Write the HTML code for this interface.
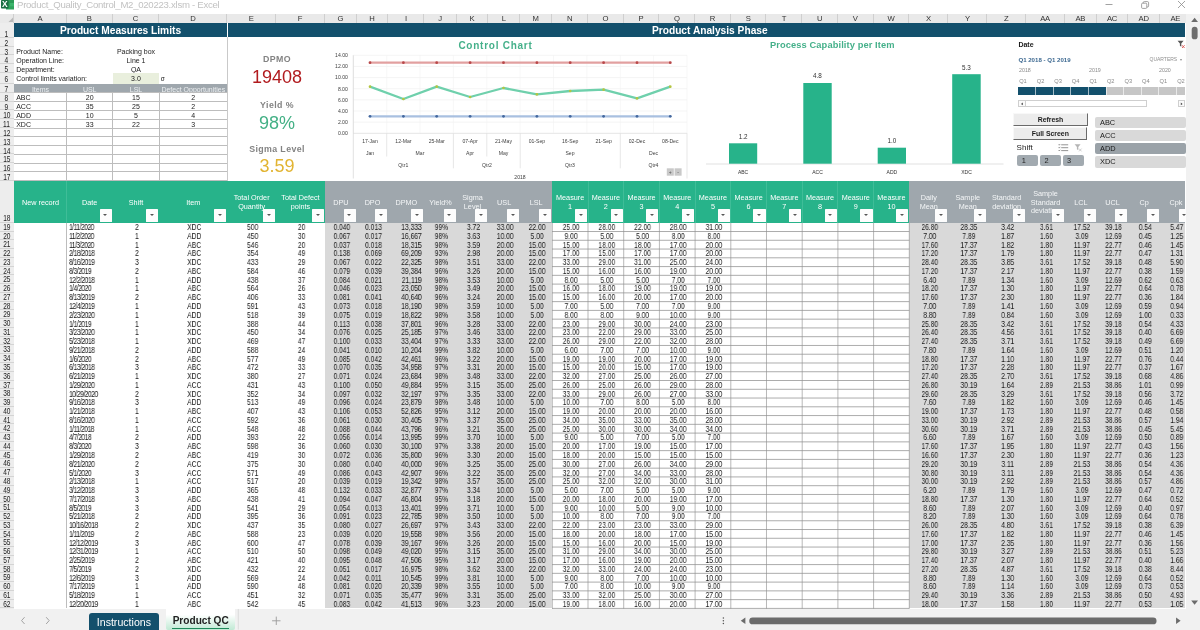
<!DOCTYPE html>
<html lang="en"><head><meta charset="utf-8"><title>Product_Quality_Control_M2_020223.xlsm - Excel</title>
<style>
html,body{margin:0;padding:0;background:#fff;}
body{width:1200px;height:630px;overflow:hidden;position:relative;font-family:"Liberation Sans",sans-serif;color:#222;}
#app{position:absolute;left:0;top:0;width:1200px;height:630px;overflow:hidden;background:#fff;will-change:transform;}
.abs{position:absolute;}
.titlebar{left:0;top:0;width:1200px;height:14.3px;background:#fff;}
.title{left:17px;top:-0.6px;font-size:9.6px;letter-spacing:-0.27px;line-height:12px;color:#c2c2c2;white-space:nowrap;}
.colhdr{left:0;top:14.3px;width:1185.5px;height:8.4px;background:#e9e9e9;overflow:hidden;}
.colhdr span{position:absolute;top:0;height:8.4px;line-height:9.9px;font-size:7.7px;letter-spacing:-0.3px;color:#333;text-align:center;border-right:1px solid #cfcfcf;box-sizing:border-box;}
.rowhdr{left:0;top:22.7px;width:14.3px;height:586px;background:#ededed;}
.rowhdr span{position:absolute;left:0;width:13.6px;text-align:center;font-size:8.7px;color:#222;border-bottom:1px solid #d4d4d4;box-sizing:border-box;}
.rowhdr span i{display:inline-block;font-style:normal;transform:scaleX(0.76);transform-origin:50% 50%;}
.band{background:#13506c;color:#fff;font-weight:bold;font-size:10.2px;text-align:center;line-height:16.8px;height:14.5px;top:22.7px;overflow:hidden;white-space:nowrap;}
.t7{font-size:7px;line-height:8.75px;white-space:nowrap;color:#1c1c1c;}
.hl{background:#bdbdbd;height:1px;}
.vl{background:#bdbdbd;width:1px;}
.h18{top:182px;height:42.1px;color:#fff;font-size:7.25px;line-height:8.7px;text-align:center;display:flex;align-items:center;justify-content:center;overflow:hidden;}
.g{background:#27b38a;}
.s{background:#9fa7ad;color:#eef1f3;}
.fb{position:absolute;width:12.3px;height:12.3px;top:209.4px;background:#fdfdfd;border-radius:0.5px;}
.fb:after{content:"";position:absolute;left:3.8px;top:5px;border-left:2.4px solid transparent;border-right:2.4px solid transparent;border-top:2.6px solid #555;}
.r{position:absolute;left:0;width:1500px;height:8.765px;}
.r span{position:absolute;top:0.3px;height:8.75px;line-height:9.1px;font-size:8.2px;text-align:center;white-space:nowrap;color:#161616;}
.kl{font-weight:bold;color:#838383;font-size:8.8px;letter-spacing:0.4px;text-align:center;width:100px;left:227px;white-space:nowrap;}
.kv{font-size:18px;text-align:center;width:100px;left:227px;white-space:nowrap;line-height:20px;}
.btn{background:#ececec;border-right:1.6px solid #6a6a6a;border-bottom:1.6px solid #6a6a6a;border-top:1px solid #f8f8f8;border-left:1px solid #f8f8f8;box-sizing:border-box;font-weight:bold;font-size:6.9px;text-align:center;color:#1a1a1a;}
.sl{left:1095px;width:90.5px;height:11.3px;background:#d9d9d9;border-radius:2px;font-size:7.4px;line-height:11.8px;color:#1a1a1a;box-sizing:border-box;padding-left:5px;}
.sb{height:10.6px;top:155.1px;background:#a2aab0;border-radius:2px;font-size:7.4px;line-height:11px;color:#222;box-sizing:border-box;padding-left:4.5px;}
</style></head><body><div id="app">

<div class="abs titlebar"></div>
<svg class="abs" style="left:1px;top:0" width="13" height="10.5" viewBox="0 0 13 10.5"><rect x="5" y="0" width="8" height="9.5" fill="#2fa35c"/><rect x="5" y="0" width="8" height="3" fill="#2b9a56"/><rect x="9" y="3" width="4" height="3.3" fill="#3bb56b"/><rect x="0" y="0" width="7.6" height="8.6" rx="0.8" fill="#1b6f43"/><text x="3.8" y="7.1" font-family="Liberation Sans, sans-serif" font-size="8.4" font-weight="bold" fill="#fff" text-anchor="middle">X</text></svg>
<div class="abs title">Product_Quality_Control_M2_020223.xlsm - Excel</div>
<svg class="abs" style="left:1095px;top:0" width="100" height="12" viewBox="0 0 100 12"><path d="M10.5 4.5 H17.5" stroke="#8a8a8a" stroke-width="0.8"/><rect x="46.6" y="3.2" width="5.2" height="5.2" rx="1" fill="none" stroke="#8a8a8a" stroke-width="0.8"/><path d="M48.2 3.2 V2.7 a1.1 1.1 0 0 1 1.1 -1.1 h3.2 a1.1 1.1 0 0 1 1.1 1.1 v3.2 a1.1 1.1 0 0 1 -1.1 1.1 h-0.7" fill="none" stroke="#8a8a8a" stroke-width="0.8"/><path d="M83 1 L90 8 M90 1 L83 8" stroke="#8a8a8a" stroke-width="0.8"/></svg>
<div class="abs colhdr">
<span style="left:0;width:14.3px"></span>
<span style="left:14.3px;width:52.4px">A</span>
<span style="left:66.7px;width:46.0px">B</span>
<span style="left:112.7px;width:46.6px">C</span>
<span style="left:159.3px;width:68.0px">D</span>
<span style="left:227.3px;width:48.7px">E</span>
<span style="left:276.0px;width:49.0px">F</span>
<span style="left:325.0px;width:31.7px">G</span>
<span style="left:356.7px;width:31.6px">H</span>
<span style="left:388.3px;width:36.0px">I</span>
<span style="left:424.3px;width:32.4px">J</span>
<span style="left:456.7px;width:31.6px">K</span>
<span style="left:488.3px;width:31.7px">L</span>
<span style="left:520.0px;width:32.3px">M</span>
<span style="left:552.3px;width:35.7px">N</span>
<span style="left:588.0px;width:35.7px">O</span>
<span style="left:623.7px;width:35.7px">P</span>
<span style="left:659.4px;width:35.7px">Q</span>
<span style="left:695.1px;width:35.7px">R</span>
<span style="left:730.8px;width:35.7px">S</span>
<span style="left:766.5px;width:35.7px">T</span>
<span style="left:802.2px;width:35.7px">U</span>
<span style="left:837.9px;width:35.7px">V</span>
<span style="left:873.6px;width:35.7px">W</span>
<span style="left:909.3px;width:39.0px">X</span>
<span style="left:948.3px;width:39.0px">Y</span>
<span style="left:987.3px;width:38.7px">Z</span>
<span style="left:1026.0px;width:39.0px">AA</span>
<span style="left:1065.0px;width:31.7px">AB</span>
<span style="left:1096.7px;width:31.6px">AC</span>
<span style="left:1128.3px;width:31.7px">AD</span>
<span style="left:1160.0px;width:31.7px">AE</span>
</div>
<svg class="abs" style="left:8px;top:16.5px" width="6" height="6" viewBox="0 0 6 6"><path d="M5 0.5 V5 H0.5 Z" fill="#b9b9b9"/></svg>
<div class="abs rowhdr">
<span style="top:0.00px;height:15.70px;line-height:22.80px"><i>1</i></span>
<span style="top:15.70px;height:8.30px;line-height:10.90px"><i>2</i></span>
<span style="top:24.00px;height:8.60px;line-height:11.20px"><i>3</i></span>
<span style="top:32.60px;height:9.00px;line-height:11.60px"><i>4</i></span>
<span style="top:41.60px;height:9.00px;line-height:11.60px"><i>5</i></span>
<span style="top:50.60px;height:10.90px;line-height:13.50px"><i>6</i></span>
<span style="top:61.50px;height:8.77px;line-height:11.37px"><i>7</i></span>
<span style="top:70.27px;height:8.77px;line-height:11.37px"><i>8</i></span>
<span style="top:79.04px;height:8.77px;line-height:11.37px"><i>9</i></span>
<span style="top:87.81px;height:8.77px;line-height:11.37px"><i>10</i></span>
<span style="top:96.58px;height:8.77px;line-height:11.37px"><i>11</i></span>
<span style="top:105.35px;height:8.77px;line-height:11.37px"><i>12</i></span>
<span style="top:114.12px;height:8.77px;line-height:11.37px"><i>13</i></span>
<span style="top:122.89px;height:8.77px;line-height:11.37px"><i>14</i></span>
<span style="top:131.66px;height:8.77px;line-height:11.37px"><i>15</i></span>
<span style="top:140.43px;height:8.77px;line-height:11.37px"><i>16</i></span>
<span style="top:149.20px;height:8.80px;line-height:11.40px"><i>17</i></span>
<span style="top:158.00px;height:42.10px;line-height:75.60px"><i>18</i></span>
<span style="top:200.10px;height:8.76px;line-height:9.36px"><i>19</i></span>
<span style="top:208.87px;height:8.77px;line-height:9.37px"><i>20</i></span>
<span style="top:217.63px;height:8.77px;line-height:9.37px"><i>21</i></span>
<span style="top:226.40px;height:8.76px;line-height:9.36px"><i>22</i></span>
<span style="top:235.16px;height:8.76px;line-height:9.36px"><i>23</i></span>
<span style="top:243.93px;height:8.76px;line-height:9.36px"><i>24</i></span>
<span style="top:252.69px;height:8.77px;line-height:9.37px"><i>25</i></span>
<span style="top:261.46px;height:8.76px;line-height:9.36px"><i>26</i></span>
<span style="top:270.22px;height:8.76px;line-height:9.36px"><i>27</i></span>
<span style="top:278.99px;height:8.77px;line-height:9.37px"><i>28</i></span>
<span style="top:287.75px;height:8.76px;line-height:9.36px"><i>29</i></span>
<span style="top:296.52px;height:8.76px;line-height:9.36px"><i>30</i></span>
<span style="top:305.28px;height:8.76px;line-height:9.36px"><i>31</i></span>
<span style="top:314.05px;height:8.76px;line-height:9.36px"><i>32</i></span>
<span style="top:322.81px;height:8.77px;line-height:9.37px"><i>33</i></span>
<span style="top:331.58px;height:8.76px;line-height:9.36px"><i>34</i></span>
<span style="top:340.34px;height:8.76px;line-height:9.36px"><i>35</i></span>
<span style="top:349.11px;height:8.77px;line-height:9.37px"><i>36</i></span>
<span style="top:357.87px;height:8.76px;line-height:9.36px"><i>37</i></span>
<span style="top:366.64px;height:8.76px;line-height:9.36px"><i>38</i></span>
<span style="top:375.40px;height:8.76px;line-height:9.36px"><i>39</i></span>
<span style="top:384.17px;height:8.76px;line-height:9.36px"><i>40</i></span>
<span style="top:392.93px;height:8.77px;line-height:9.37px"><i>41</i></span>
<span style="top:401.70px;height:8.76px;line-height:9.36px"><i>42</i></span>
<span style="top:410.46px;height:8.76px;line-height:9.36px"><i>43</i></span>
<span style="top:419.23px;height:8.77px;line-height:9.37px"><i>44</i></span>
<span style="top:427.99px;height:8.76px;line-height:9.36px"><i>45</i></span>
<span style="top:436.76px;height:8.76px;line-height:9.36px"><i>46</i></span>
<span style="top:445.52px;height:8.76px;line-height:9.36px"><i>47</i></span>
<span style="top:454.29px;height:8.77px;line-height:9.37px"><i>48</i></span>
<span style="top:463.05px;height:8.76px;line-height:9.36px"><i>49</i></span>
<span style="top:471.82px;height:8.76px;line-height:9.36px"><i>50</i></span>
<span style="top:480.58px;height:8.77px;line-height:9.37px"><i>51</i></span>
<span style="top:489.35px;height:8.76px;line-height:9.36px"><i>52</i></span>
<span style="top:498.11px;height:8.77px;line-height:9.37px"><i>53</i></span>
<span style="top:506.88px;height:8.76px;line-height:9.36px"><i>54</i></span>
<span style="top:515.64px;height:8.76px;line-height:9.36px"><i>55</i></span>
<span style="top:524.40px;height:8.77px;line-height:9.37px"><i>56</i></span>
<span style="top:533.17px;height:8.76px;line-height:9.36px"><i>57</i></span>
<span style="top:541.93px;height:8.77px;line-height:9.37px"><i>58</i></span>
<span style="top:550.70px;height:8.76px;line-height:9.36px"><i>59</i></span>
<span style="top:559.46px;height:8.77px;line-height:9.37px"><i>60</i></span>
<span style="top:568.23px;height:8.76px;line-height:9.36px"><i>61</i></span>
<span style="top:577.00px;height:8.76px;line-height:9.36px"><i>62</i></span>
</div>
<div class="abs band" style="left:14.3px;width:212.4px">Product Measures Limits</div>
<div class="abs" style="left:227.9px;top:22.7px;width:957.6px;height:14.5px;overflow:hidden"><div class="abs band" style="left:0;top:0;width:963.8px">Product Analysis Phase</div></div>
<div class="abs t7" style="left:16.2px;top:46.70px;line-height:9.40px">Product Name:</div>
<div class="abs t7" style="left:112.7px;width:46.6px;text-align:center;top:46.70px;line-height:9.40px">Packing box</div>
<div class="abs t7" style="left:16.2px;top:55.90px;line-height:9.20px">Operation Line:</div>
<div class="abs t7" style="left:112.7px;width:46.6px;text-align:center;top:55.90px;line-height:9.20px">Line 1</div>
<div class="abs t7" style="left:16.2px;top:64.90px;line-height:9.20px">Department:</div>
<div class="abs t7" style="left:112.7px;width:46.6px;text-align:center;top:64.90px;line-height:9.20px">QA</div>
<div class="abs" style="left:112.7px;top:73.00px;width:46.6px;height:11.20px;background:#e9efdd"></div>
<div class="abs t7" style="left:16.2px;top:74.00px;line-height:10.80px">Control limits variation:</div>
<div class="abs t7" style="left:112.7px;width:46.6px;text-align:center;top:74.00px;line-height:10.80px">3.0</div>
<div class="abs t7" style="left:160.7px;top:74.00px;line-height:10.80px;font-size:6.5px">&#963;</div>
<div class="abs" style="left:14.3px;top:84.20px;width:213.0px;height:8.77px;background:#9fa7ad"></div>
<div class="abs t7" style="left:14.3px;width:52.4px;text-align:center;top:85.50px;color:#eceff1;overflow:hidden">Items</div>
<div class="abs t7" style="left:66.7px;width:46.0px;text-align:center;top:85.50px;color:#eceff1;overflow:hidden">USL</div>
<div class="abs t7" style="left:112.7px;width:46.6px;text-align:center;top:85.50px;color:#eceff1;overflow:hidden">LSL</div>
<div class="abs t7" style="left:159.3px;width:68.0px;text-align:center;top:85.50px;color:#eceff1;overflow:hidden">Defect Opportunities</div>
<div class="abs t7" style="left:16.2px;top:94.37px">ABC</div>
<div class="abs t7" style="left:66.7px;width:46.0px;text-align:center;top:94.37px">20</div>
<div class="abs t7" style="left:112.7px;width:46.6px;text-align:center;top:94.37px">15</div>
<div class="abs t7" style="left:159.3px;width:68.0px;text-align:center;top:94.37px">2</div>
<div class="abs t7" style="left:16.2px;top:103.14px">ACC</div>
<div class="abs t7" style="left:66.7px;width:46.0px;text-align:center;top:103.14px">35</div>
<div class="abs t7" style="left:112.7px;width:46.6px;text-align:center;top:103.14px">25</div>
<div class="abs t7" style="left:159.3px;width:68.0px;text-align:center;top:103.14px">2</div>
<div class="abs t7" style="left:16.2px;top:111.91px">ADD</div>
<div class="abs t7" style="left:66.7px;width:46.0px;text-align:center;top:111.91px">10</div>
<div class="abs t7" style="left:112.7px;width:46.6px;text-align:center;top:111.91px">5</div>
<div class="abs t7" style="left:159.3px;width:68.0px;text-align:center;top:111.91px">4</div>
<div class="abs t7" style="left:16.2px;top:120.68px">XDC</div>
<div class="abs t7" style="left:66.7px;width:46.0px;text-align:center;top:120.68px">33</div>
<div class="abs t7" style="left:112.7px;width:46.6px;text-align:center;top:120.68px">22</div>
<div class="abs t7" style="left:159.3px;width:68.0px;text-align:center;top:120.68px">3</div>
<div class="abs hl" style="left:14.3px;width:213.0px;top:92.47px"></div>
<div class="abs hl" style="left:14.3px;width:213.0px;top:101.24px"></div>
<div class="abs hl" style="left:14.3px;width:213.0px;top:110.01px"></div>
<div class="abs hl" style="left:14.3px;width:213.0px;top:118.78px"></div>
<div class="abs hl" style="left:14.3px;width:213.0px;top:127.55px"></div>
<div class="abs hl" style="left:14.3px;width:213.0px;top:136.32px"></div>
<div class="abs hl" style="left:14.3px;width:213.0px;top:145.09px"></div>
<div class="abs hl" style="left:14.3px;width:213.0px;top:153.86px"></div>
<div class="abs hl" style="left:14.3px;width:213.0px;top:162.63px"></div>
<div class="abs hl" style="left:14.3px;width:213.0px;top:171.40px"></div>
<div class="abs hl" style="left:14.3px;width:213.0px;top:180.20px"></div>
<div class="abs vl" style="left:66.2px;top:92.97px;height:87.73px"></div>
<div class="abs vl" style="left:112.2px;top:92.97px;height:87.73px"></div>
<div class="abs vl" style="left:158.8px;top:92.97px;height:87.73px"></div>
<div class="abs vl" style="left:226.8px;top:37.2px;height:143.5px;background:#c9c9c9"></div>
<div class="abs kl" style="top:54px">DPMO</div>
<div class="abs kv" style="top:67px;color:#b11a1e">19408</div>
<div class="abs kl" style="top:100px">Yield %</div>
<div class="abs kv" style="top:113px;color:#43b085">98%</div>
<div class="abs kl" style="top:143.8px">Sigma Level</div>
<div class="abs kv" style="top:156px;color:#e2b432">3.59</div>
<svg class="abs" style="left:330px;top:38px" width="370" height="143" viewBox="0 0 370 143" font-family="Liberation Sans, sans-serif"><text x="165.5" y="10.6" text-anchor="middle" font-size="10" font-weight="bold" fill="#45b08a" letter-spacing="0.75">Control Chart</text><line x1="23.3" x2="357.0" y1="95.30" y2="95.30" stroke="#d4d4d4" stroke-width="0.6"/><text x="17.8" y="97.10" text-anchor="end" font-size="5.1" fill="#404040">0.00</text><line x1="23.3" x2="357.0" y1="84.16" y2="84.16" stroke="#efefef" stroke-width="0.6"/><text x="17.8" y="85.96" text-anchor="end" font-size="5.1" fill="#404040">2.00</text><line x1="23.3" x2="357.0" y1="73.02" y2="73.02" stroke="#efefef" stroke-width="0.6"/><text x="17.8" y="74.82" text-anchor="end" font-size="5.1" fill="#404040">4.00</text><line x1="23.3" x2="357.0" y1="61.87" y2="61.87" stroke="#efefef" stroke-width="0.6"/><text x="17.8" y="63.67" text-anchor="end" font-size="5.1" fill="#404040">6.00</text><line x1="23.3" x2="357.0" y1="50.73" y2="50.73" stroke="#efefef" stroke-width="0.6"/><text x="17.8" y="52.53" text-anchor="end" font-size="5.1" fill="#404040">8.00</text><line x1="23.3" x2="357.0" y1="39.59" y2="39.59" stroke="#efefef" stroke-width="0.6"/><text x="17.8" y="41.39" text-anchor="end" font-size="5.1" fill="#404040">10.00</text><line x1="23.3" x2="357.0" y1="28.45" y2="28.45" stroke="#efefef" stroke-width="0.6"/><text x="17.8" y="30.25" text-anchor="end" font-size="5.1" fill="#404040">12.00</text><line x1="23.3" x2="357.0" y1="17.31" y2="17.31" stroke="#efefef" stroke-width="0.6"/><text x="17.8" y="19.11" text-anchor="end" font-size="5.1" fill="#404040">14.00</text><line x1="23.3" x2="23.3" y1="17.3" y2="95.3" stroke="#f1f1f1" stroke-width="0.6"/><line x1="56.7" x2="56.7" y1="17.3" y2="95.3" stroke="#f1f1f1" stroke-width="0.6"/><line x1="90.0" x2="90.0" y1="17.3" y2="95.3" stroke="#f1f1f1" stroke-width="0.6"/><line x1="123.4" x2="123.4" y1="17.3" y2="95.3" stroke="#f1f1f1" stroke-width="0.6"/><line x1="156.8" x2="156.8" y1="17.3" y2="95.3" stroke="#f1f1f1" stroke-width="0.6"/><line x1="190.1" x2="190.1" y1="17.3" y2="95.3" stroke="#f1f1f1" stroke-width="0.6"/><line x1="223.5" x2="223.5" y1="17.3" y2="95.3" stroke="#f1f1f1" stroke-width="0.6"/><line x1="256.9" x2="256.9" y1="17.3" y2="95.3" stroke="#f1f1f1" stroke-width="0.6"/><line x1="290.3" x2="290.3" y1="17.3" y2="95.3" stroke="#f1f1f1" stroke-width="0.6"/><line x1="323.6" x2="323.6" y1="17.3" y2="95.3" stroke="#f1f1f1" stroke-width="0.6"/><line x1="357.0" x2="357.0" y1="17.3" y2="95.3" stroke="#f1f1f1" stroke-width="0.6"/><line x1="23.3" x2="23.3" y1="17.3" y2="140.5" stroke="#d4d4d4" stroke-width="0.7"/><line x1="56.7" x2="56.7" y1="95.3" y2="118.5" stroke="#dcdcdc" stroke-width="0.7"/><line x1="123.4" x2="123.4" y1="95.3" y2="130.3" stroke="#dcdcdc" stroke-width="0.7"/><line x1="156.8" x2="156.8" y1="95.3" y2="118.5" stroke="#dcdcdc" stroke-width="0.7"/><line x1="190.2" x2="190.2" y1="95.3" y2="130.3" stroke="#dcdcdc" stroke-width="0.7"/><line x1="290.3" x2="290.3" y1="95.3" y2="130.3" stroke="#dcdcdc" stroke-width="0.7"/><line x1="357.0" x2="357.0" y1="95.3" y2="140.5" stroke="#dcdcdc" stroke-width="0.7"/><line x1="40.0" x2="340.3" y1="24.7" y2="24.7" stroke="#e2a0a0" stroke-width="2.3"/><line x1="40.0" x2="340.3" y1="78.3" y2="78.3" stroke="#a9c0e0" stroke-width="2.3"/><polyline points="40.0,48.7 73.4,61.0 106.7,48.7 140.1,59.0 173.5,50.0 206.9,56.3 240.2,53.0 273.6,51.7 307.0,60.3 340.3,48.7" fill="none" stroke="#6fd0ac" stroke-width="2.3" stroke-linejoin="round"/><circle cx="40.0" cy="48.7" r="1.35" fill="#b5c540"/><circle cx="73.4" cy="61.0" r="1.35" fill="#b5c540"/><circle cx="106.7" cy="48.7" r="1.35" fill="#b5c540"/><circle cx="140.1" cy="59.0" r="1.35" fill="#b5c540"/><circle cx="173.5" cy="50.0" r="1.35" fill="#b5c540"/><circle cx="206.9" cy="56.3" r="1.35" fill="#b5c540"/><circle cx="240.2" cy="53.0" r="1.35" fill="#b5c540"/><circle cx="273.6" cy="51.7" r="1.35" fill="#b5c540"/><circle cx="307.0" cy="60.3" r="1.35" fill="#b5c540"/><circle cx="340.3" cy="48.7" r="1.35" fill="#b5c540"/><circle cx="40.0" cy="24.7" r="1.4" fill="#b8484a"/><circle cx="40.0" cy="78.3" r="1.4" fill="#44689f"/><circle cx="73.4" cy="24.7" r="1.4" fill="#b8484a"/><circle cx="73.4" cy="78.3" r="1.4" fill="#44689f"/><circle cx="106.7" cy="24.7" r="1.4" fill="#b8484a"/><circle cx="106.7" cy="78.3" r="1.4" fill="#44689f"/><circle cx="140.1" cy="24.7" r="1.4" fill="#b8484a"/><circle cx="140.1" cy="78.3" r="1.4" fill="#44689f"/><circle cx="173.5" cy="24.7" r="1.4" fill="#b8484a"/><circle cx="173.5" cy="78.3" r="1.4" fill="#44689f"/><circle cx="206.9" cy="24.7" r="1.4" fill="#b8484a"/><circle cx="206.9" cy="78.3" r="1.4" fill="#44689f"/><circle cx="240.2" cy="24.7" r="1.4" fill="#b8484a"/><circle cx="240.2" cy="78.3" r="1.4" fill="#44689f"/><circle cx="273.6" cy="24.7" r="1.4" fill="#b8484a"/><circle cx="273.6" cy="78.3" r="1.4" fill="#44689f"/><circle cx="307.0" cy="24.7" r="1.4" fill="#b8484a"/><circle cx="307.0" cy="78.3" r="1.4" fill="#44689f"/><circle cx="340.3" cy="24.7" r="1.4" fill="#b8484a"/><circle cx="340.3" cy="78.3" r="1.4" fill="#44689f"/><text x="40.0" y="104.8" text-anchor="middle" font-size="5.1" fill="#404040">17-Jan</text><text x="73.4" y="104.8" text-anchor="middle" font-size="5.1" fill="#404040">12-Mar</text><text x="106.7" y="104.8" text-anchor="middle" font-size="5.1" fill="#404040">25-Mar</text><text x="140.1" y="104.8" text-anchor="middle" font-size="5.1" fill="#404040">07-Apr</text><text x="173.5" y="104.8" text-anchor="middle" font-size="5.1" fill="#404040">21-May</text><text x="206.9" y="104.8" text-anchor="middle" font-size="5.1" fill="#404040">01-Sep</text><text x="240.2" y="104.8" text-anchor="middle" font-size="5.1" fill="#404040">16-Sep</text><text x="273.6" y="104.8" text-anchor="middle" font-size="5.1" fill="#404040">21-Sep</text><text x="307.0" y="104.8" text-anchor="middle" font-size="5.1" fill="#404040">02-Dec</text><text x="340.3" y="104.8" text-anchor="middle" font-size="5.1" fill="#404040">08-Dec</text><text x="40.0" y="117.0" text-anchor="middle" font-size="5.1" fill="#404040">Jan</text><text x="90.0" y="117.0" text-anchor="middle" font-size="5.1" fill="#404040">Mar</text><text x="140.0" y="117.0" text-anchor="middle" font-size="5.1" fill="#404040">Apr</text><text x="173.5" y="117.0" text-anchor="middle" font-size="5.1" fill="#404040">May</text><text x="240.0" y="117.0" text-anchor="middle" font-size="5.1" fill="#404040">Sep</text><text x="323.5" y="117.0" text-anchor="middle" font-size="5.1" fill="#404040">Dec</text><text x="73.3" y="128.8" text-anchor="middle" font-size="5.1" fill="#404040">Qtr1</text><text x="157.0" y="128.8" text-anchor="middle" font-size="5.1" fill="#404040">Qtr2</text><text x="240.0" y="128.8" text-anchor="middle" font-size="5.1" fill="#404040">Qtr3</text><text x="323.5" y="128.8" text-anchor="middle" font-size="5.1" fill="#404040">Qtr4</text><text x="190.0" y="140.6" text-anchor="middle" font-size="5.1" fill="#404040">2018</text><rect x="336.8" y="130.3" width="7" height="7.4" fill="#c9c9c9"/><rect x="344.6" y="130.3" width="7" height="7.4" fill="#c9c9c9"/><text x="340.3" y="135.8" text-anchor="middle" font-size="5" fill="#555">+</text><text x="348.1" y="135.6" text-anchor="middle" font-size="5" fill="#555">-</text></svg>
<svg class="abs" style="left:700px;top:38px" width="310" height="143" viewBox="0 0 310 143" font-family="Liberation Sans, sans-serif"><text x="132.3" y="9.9" text-anchor="middle" font-size="9.3" font-weight="bold" fill="#45b08a" letter-spacing="0.1">Process Capability per Item</text><line x1="6.0" x2="303.5" y1="126.0" y2="126.0" stroke="#d9d9d9" stroke-width="0.8"/><rect x="29.0" y="105.3" width="28.2" height="20.4" fill="#27b38a"/><text x="43.1" y="100.7" text-anchor="middle" font-size="6.3" fill="#303030">1.2</text><text x="43.1" y="135.8" text-anchor="middle" font-size="5" fill="#303030">ABC</text><rect x="103.3" y="45.0" width="28.4" height="80.7" fill="#27b38a"/><text x="117.5" y="40.4" text-anchor="middle" font-size="6.3" fill="#303030">4.8</text><text x="117.5" y="135.8" text-anchor="middle" font-size="5" fill="#303030">ACC</text><rect x="177.7" y="109.7" width="28.3" height="16.0" fill="#27b38a"/><text x="191.9" y="105.1" text-anchor="middle" font-size="6.3" fill="#303030">1.0</text><text x="191.9" y="135.8" text-anchor="middle" font-size="5" fill="#303030">ADD</text><rect x="252.2" y="36.2" width="28.5" height="89.5" fill="#27b38a"/><text x="266.5" y="31.6" text-anchor="middle" font-size="6.3" fill="#303030">5.3</text><text x="266.5" y="135.8" text-anchor="middle" font-size="5" fill="#303030">XDC</text></svg>
<div class="abs" style="left:1018.4px;top:40.2px;font-size:7px;font-weight:bold;color:#1a1a1a;line-height:9px">Date</div>
<svg class="abs" style="left:1176.5px;top:39.5px" width="10" height="10" viewBox="0 0 10 10"><path d="M0.6 0.8 H6.6 L4.3 3.6 V6.8 L2.9 5.8 V3.6 Z" fill="#555"/><path d="M5 5.2 L7.6 8 M7.6 5.2 L5 8" stroke="#d9534f" stroke-width="0.9"/></svg>
<div class="abs" style="left:1018.4px;top:54.6px;font-size:6.1px;font-weight:bold;color:#3d6991;line-height:9px;white-space:nowrap">Q1 2018 - Q1 2019</div>
<div class="abs" style="left:1149.5px;top:55px;font-size:5px;color:#909090;line-height:9px;white-space:nowrap">QUARTERS <span style="font-size:4px;position:relative;top:-0.5px;left:1px">&#9662;</span></div>
<div class="abs" style="left:1019.0px;top:66.3px;font-size:5.3px;color:#8a8a8a;line-height:9px">2018</div>
<div class="abs" style="left:1089.0px;top:66.3px;font-size:5.3px;color:#8a8a8a;line-height:9px">2019</div>
<div class="abs" style="left:1159.0px;top:66.3px;font-size:5.3px;color:#8a8a8a;line-height:9px">2020</div>
<div class="abs" style="left:1018.4px;top:76px;width:167.1px;height:20px;overflow:hidden">
<div class="abs" style="left:0.80px;top:1px;font-size:5.7px;color:#8a8a8a;line-height:9px">Q1</div>
<div class="abs" style="left:0.00px;top:10.9px;width:17.6px;height:8.5px;background:#13506c"></div>
<div class="abs" style="left:18.35px;top:1px;font-size:5.7px;color:#8a8a8a;line-height:9px">Q2</div>
<div class="abs" style="left:17.55px;top:10.9px;width:17.6px;height:8.5px;background:#13506c"></div>
<div class="abs" style="left:16.95px;top:10.9px;width:0.9px;height:8.5px;background:rgba(255,255,255,0.62)"></div>
<div class="abs" style="left:35.90px;top:1px;font-size:5.7px;color:#8a8a8a;line-height:9px">Q3</div>
<div class="abs" style="left:35.10px;top:10.9px;width:17.6px;height:8.5px;background:#13506c"></div>
<div class="abs" style="left:34.50px;top:10.9px;width:0.9px;height:8.5px;background:rgba(255,255,255,0.62)"></div>
<div class="abs" style="left:53.45px;top:1px;font-size:5.7px;color:#8a8a8a;line-height:9px">Q4</div>
<div class="abs" style="left:52.65px;top:10.9px;width:17.6px;height:8.5px;background:#13506c"></div>
<div class="abs" style="left:52.05px;top:10.9px;width:0.9px;height:8.5px;background:rgba(255,255,255,0.62)"></div>
<div class="abs" style="left:71.00px;top:1px;font-size:5.7px;color:#8a8a8a;line-height:9px">Q1</div>
<div class="abs" style="left:70.20px;top:10.9px;width:17.6px;height:8.5px;background:#13506c"></div>
<div class="abs" style="left:69.60px;top:10.9px;width:0.9px;height:8.5px;background:rgba(255,255,255,0.62)"></div>
<div class="abs" style="left:88.55px;top:1px;font-size:5.7px;color:#8a8a8a;line-height:9px">Q2</div>
<div class="abs" style="left:87.75px;top:10.9px;width:17.6px;height:8.5px;background:#c6c6c6"></div>
<div class="abs" style="left:87.15px;top:10.9px;width:0.9px;height:8.5px;background:rgba(255,255,255,0.62)"></div>
<div class="abs" style="left:106.10px;top:1px;font-size:5.7px;color:#8a8a8a;line-height:9px">Q3</div>
<div class="abs" style="left:105.30px;top:10.9px;width:17.6px;height:8.5px;background:#c6c6c6"></div>
<div class="abs" style="left:104.70px;top:10.9px;width:0.9px;height:8.5px;background:rgba(255,255,255,0.62)"></div>
<div class="abs" style="left:123.65px;top:1px;font-size:5.7px;color:#8a8a8a;line-height:9px">Q4</div>
<div class="abs" style="left:122.85px;top:10.9px;width:17.6px;height:8.5px;background:#c6c6c6"></div>
<div class="abs" style="left:122.25px;top:10.9px;width:0.9px;height:8.5px;background:rgba(255,255,255,0.62)"></div>
<div class="abs" style="left:141.20px;top:1px;font-size:5.7px;color:#8a8a8a;line-height:9px">Q1</div>
<div class="abs" style="left:140.40px;top:10.9px;width:17.6px;height:8.5px;background:#c6c6c6"></div>
<div class="abs" style="left:139.80px;top:10.9px;width:0.9px;height:8.5px;background:rgba(255,255,255,0.62)"></div>
<div class="abs" style="left:158.75px;top:1px;font-size:5.7px;color:#8a8a8a;line-height:9px">Q2</div>
<div class="abs" style="left:157.95px;top:10.9px;width:17.6px;height:8.5px;background:#c6c6c6"></div>
<div class="abs" style="left:157.35px;top:10.9px;width:0.9px;height:8.5px;background:rgba(255,255,255,0.62)"></div>
</div>
<div class="abs" style="left:1018.4px;top:99.8px;width:128.4px;height:7.6px;box-sizing:border-box;border:1px solid #cfcfcf;background:#fff"></div>
<div class="abs" style="left:1018.4px;top:99.8px;width:7.6px;height:7.6px;box-sizing:border-box;border:1px solid #cfcfcf;background:#fbfbfb"></div>
<div class="abs" style="left:1178.3px;top:99.8px;width:7.2px;height:7.6px;box-sizing:border-box;border:1px solid #cfcfcf;background:#fbfbfb"></div>
<svg class="abs" style="left:1018.4px;top:99.8px" width="168" height="8" viewBox="0 0 168 8"><path d="M4.8 2.6 V5.2 L3 3.9 Z" fill="#444"/><path d="M162.8 2.6 V5.2 L164.6 3.9 Z" fill="#444"/></svg>
<div class="abs btn" style="left:1013.3px;top:113.2px;width:74.4px;height:12.4px;line-height:11.6px">Refresh</div>
<div class="abs btn" style="left:1013.3px;top:127.2px;width:74px;height:12.8px;line-height:11.8px">Full Screen</div>
<div class="abs" style="left:1016.6px;top:142.6px;font-size:8px;line-height:10px;color:#222">Shift</div>
<svg class="abs" style="left:1058px;top:142.5px" width="26" height="10" viewBox="0 0 26 10"><g stroke="#666" stroke-width="0.7" fill="none"><path d="M3.2 1.8 H10.2 M3.2 4.7 H10.2 M3.2 7.6 H10.2"/><path d="M0.6 1.6 l0.6 0.6 l1 -1.2 M0.6 4.5 l0.6 0.6 l1 -1.2 M0.6 7.4 l0.6 0.6 l1 -1.2"/></g><path d="M16.6 1.2 H22.6 L20.3 4 V7.2 L18.9 6.2 V4 Z" fill="#b5b5b5"/><path d="M21 5.6 L23.6 8.4 M23.6 5.6 L21 8.4" stroke="#c9c9c9" stroke-width="0.9"/></svg>
<div class="abs sb" style="left:1017.2px;width:20.8px">1</div>
<div class="abs sb" style="left:1040.0px;width:20.8px">2</div>
<div class="abs sb" style="left:1062.6px;width:21.2px">3</div>
<div class="abs sl" style="top:117.0px;">ABC</div>
<div class="abs sl" style="top:130.1px;">ACC</div>
<div class="abs sl" style="top:143.1px;background:#9aa2a8;">ADD</div>
<div class="abs sl" style="top:156.3px;">XDC</div>
<div class="abs g" style="left:14.3px;top:180.7px;width:310.7px;height:42.1px"></div>
<div class="abs" style="left:325px;top:180.7px;width:227.3px;height:42.1px;background:#9fa7ad"></div>
<div class="abs g" style="left:552.3px;top:180.7px;width:357.0px;height:42.1px"></div>
<div class="abs" style="left:909.3px;top:180.7px;width:276.2px;height:42.1px;background:#9fa7ad"></div>
<div class="abs" style="left:0;top:0;width:1185.5px;height:630px;overflow:hidden;pointer-events:none">
<div class="abs h18" style="left:14.3px;width:52.4px;"><span>New record</span></div>
<div class="abs h18" style="left:66.7px;width:46.0px;"><span>Date</span></div>
<div class="fb" style="left:99.5px"></div>
<div class="abs h18" style="left:112.7px;width:46.6px;"><span>Shift</span></div>
<div class="fb" style="left:146.1px"></div>
<div class="abs h18" style="left:159.3px;width:68.0px;"><span>Item</span></div>
<div class="fb" style="left:214.1px"></div>
<div class="abs h18" style="left:227.3px;width:48.7px;"><span>Total Order<br>Quantity</span></div>
<div class="fb" style="left:262.8px"></div>
<div class="abs h18" style="left:276.0px;width:49.0px;"><span>Total Defect<br>points</span></div>
<div class="fb" style="left:311.8px"></div>
<div class="abs h18" style="left:325.0px;width:31.7px;color:#f4f6f7;"><span>DPU</span></div>
<div class="fb" style="left:343.5px"></div>
<div class="abs h18" style="left:356.7px;width:31.6px;color:#f4f6f7;"><span>DPO</span></div>
<div class="fb" style="left:375.1px"></div>
<div class="abs h18" style="left:388.3px;width:36.0px;color:#f4f6f7;"><span>DPMO</span></div>
<div class="fb" style="left:411.1px"></div>
<div class="abs h18" style="left:424.3px;width:32.4px;color:#f4f6f7;"><span>Yield%</span></div>
<div class="fb" style="left:443.5px"></div>
<div class="abs h18" style="left:456.7px;width:31.6px;color:#f4f6f7;"><span>Sigma<br>Level</span></div>
<div class="fb" style="left:475.1px"></div>
<div class="abs h18" style="left:488.3px;width:31.7px;color:#f4f6f7;"><span>USL</span></div>
<div class="fb" style="left:506.8px"></div>
<div class="abs h18" style="left:520.0px;width:32.3px;color:#f4f6f7;"><span>LSL</span></div>
<div class="fb" style="left:539.1px"></div>
<div class="abs h18" style="left:552.3px;width:35.7px;"><span>Measure<br>1</span></div>
<div class="fb" style="left:574.8px"></div>
<div class="abs h18" style="left:588.0px;width:35.7px;"><span>Measure<br>2</span></div>
<div class="fb" style="left:610.5px"></div>
<div class="abs h18" style="left:623.7px;width:35.7px;"><span>Measure<br>3</span></div>
<div class="fb" style="left:646.2px"></div>
<div class="abs h18" style="left:659.4px;width:35.7px;"><span>Measure<br>4</span></div>
<div class="fb" style="left:681.9px"></div>
<div class="abs h18" style="left:695.1px;width:35.7px;"><span>Measure<br>5</span></div>
<div class="fb" style="left:717.6px"></div>
<div class="abs h18" style="left:730.8px;width:35.7px;"><span>Measure<br>6</span></div>
<div class="fb" style="left:753.3px"></div>
<div class="abs h18" style="left:766.5px;width:35.7px;"><span>Measure<br>7</span></div>
<div class="fb" style="left:789.0px"></div>
<div class="abs h18" style="left:802.2px;width:35.7px;"><span>Measure<br>8</span></div>
<div class="fb" style="left:824.7px"></div>
<div class="abs h18" style="left:837.9px;width:35.7px;"><span>Measure<br>9</span></div>
<div class="fb" style="left:860.4px"></div>
<div class="abs h18" style="left:873.6px;width:35.7px;"><span>Measure<br>10</span></div>
<div class="fb" style="left:896.1px"></div>
<div class="abs h18" style="left:909.3px;width:39.0px;color:#f4f6f7;"><span>Daily<br>Mean</span></div>
<div class="fb" style="left:935.1px"></div>
<div class="abs h18" style="left:948.3px;width:39.0px;color:#f4f6f7;"><span>Sample<br>Mean</span></div>
<div class="fb" style="left:974.1px"></div>
<div class="abs h18" style="left:987.3px;width:38.7px;color:#f4f6f7;"><span>Standard<br>deviation</span></div>
<div class="fb" style="left:1012.8px"></div>
<div class="abs h18" style="left:1026.0px;width:39.0px;color:#f4f6f7;"><span>Sample<br>Standard<br>deviation</span></div>
<div class="fb" style="left:1051.8px"></div>
<div class="abs h18" style="left:1065.0px;width:31.7px;color:#f4f6f7;"><span>LCL</span></div>
<div class="fb" style="left:1083.5px"></div>
<div class="abs h18" style="left:1096.7px;width:31.6px;color:#f4f6f7;"><span>UCL</span></div>
<div class="fb" style="left:1115.1px"></div>
<div class="abs h18" style="left:1128.3px;width:31.7px;color:#f4f6f7;"><span>Cp</span></div>
<div class="fb" style="left:1146.8px"></div>
<div class="abs h18" style="left:1160.0px;width:31.7px;color:#f4f6f7;"><span>Cpk</span></div>
<div class="fb" style="left:1178.5px"></div>
</div>
<div class="abs" style="left:66.2px;top:180.7px;width:1px;height:42.1px;background:#3fbd98"></div>
<div class="abs" style="left:587.5px;top:180.7px;width:1px;height:42.1px;background:#3fbd98"></div>
<div class="abs" style="left:623.2px;top:180.7px;width:1px;height:42.1px;background:#3fbd98"></div>
<div class="abs" style="left:658.9px;top:180.7px;width:1px;height:42.1px;background:#3fbd98"></div>
<div class="abs" style="left:694.6px;top:180.7px;width:1px;height:42.1px;background:#3fbd98"></div>
<div class="abs" style="left:730.3px;top:180.7px;width:1px;height:42.1px;background:#3fbd98"></div>
<div class="abs" style="left:766.0px;top:180.7px;width:1px;height:42.1px;background:#3fbd98"></div>
<div class="abs" style="left:801.7px;top:180.7px;width:1px;height:42.1px;background:#3fbd98"></div>
<div class="abs" style="left:837.4px;top:180.7px;width:1px;height:42.1px;background:#3fbd98"></div>
<div class="abs" style="left:873.1px;top:180.7px;width:1px;height:42.1px;background:#3fbd98"></div>
<div class="abs" style="left:325px;top:222.8px;width:227.3px;height:385.7px;background:#d9d9d9"></div>
<div class="abs" style="left:909.3px;top:222.8px;width:276.2px;height:385.7px;background:#d9d9d9"></div>
<div class="abs vl" style="left:66.2px;top:222.8px;height:385.7px;background:#bdbdbd"></div>
<svg class="abs" style="left:552px;top:222.8px" width="358" height="386.2" viewBox="0 0 358 386.2">
<path d="M0.30 0 V385.7 M36.00 0 V385.7 M71.70 0 V385.7 M107.40 0 V385.7 M143.10 0 V385.7 M178.80 0 V385.7 M214.50 0 V385.7 M250.20 0 V385.7 M285.90 0 V385.7 M321.60 0 V385.7 M357.30 0 V385.7" stroke="#a0a0a0" stroke-width="0.75" fill="none"/>
<path d="M0 8.52 H357.3 M0 17.28 H357.3 M0 26.05 H357.3 M0 34.81 H357.3 M0 43.58 H357.3 M0 52.34 H357.3 M0 61.11 H357.3 M0 69.87 H357.3 M0 78.64 H357.3 M0 87.40 H357.3 M0 96.17 H357.3 M0 104.93 H357.3 M0 113.70 H357.3 M0 122.46 H357.3 M0 131.23 H357.3 M0 139.99 H357.3 M0 148.75 H357.3 M0 157.52 H357.3 M0 166.29 H357.3 M0 175.05 H357.3 M0 183.81 H357.3 M0 192.58 H357.3 M0 201.35 H357.3 M0 210.11 H357.3 M0 218.88 H357.3 M0 227.64 H357.3 M0 236.41 H357.3 M0 245.17 H357.3 M0 253.94 H357.3 M0 262.70 H357.3 M0 271.47 H357.3 M0 280.23 H357.3 M0 289.00 H357.3 M0 297.76 H357.3 M0 306.53 H357.3 M0 315.29 H357.3 M0 324.06 H357.3 M0 332.82 H357.3 M0 341.59 H357.3 M0 350.35 H357.3 M0 359.12 H357.3 M0 367.88 H357.3 M0 376.65 H357.3 M0 385.41 H357.3" stroke="#909090" stroke-width="0.75" fill="none"/>
</svg>
<div class="abs" style="left:0;top:0;width:1185.5px;height:608.6px;overflow:hidden">
<div class="abs rows" style="left:0.5px;top:0;width:1445.7px;height:608.6px;transform:scaleX(0.82);transform-origin:0 0">
<div class="r" style="top:222.80px"><span style="left:82.9px;text-align:left;letter-spacing:-0.6px">1/11/2020</span><span style="left:137.4px;width:56.8px">2</span><span style="left:194.3px;width:82.9px">XDC</span><span style="left:277.2px;width:59.4px">500</span><span style="left:336.6px;width:59.8px">20</span><span style="left:396.3px;width:38.7px">0.040</span><span style="left:435.0px;width:38.5px">0.013</span><span style="left:473.5px;width:39.6px;text-align:right">13,333</span><span style="left:517.4px;width:39.5px">99%</span><span style="left:557.0px;width:38.5px">3.72</span><span style="left:595.5px;width:38.7px">33.00</span><span style="left:634.1px;width:39.4px">22.00</span><span style="left:673.5px;width:43.5px">25.00</span><span style="left:717.1px;width:43.5px">28.00</span><span style="left:760.6px;width:43.5px">22.00</span><span style="left:804.1px;width:43.5px">28.00</span><span style="left:847.7px;width:43.5px">31.00</span><span style="left:1108.9px;width:47.6px">26.80</span><span style="left:1156.5px;width:47.6px">28.35</span><span style="left:1204.0px;width:47.2px">3.42</span><span style="left:1251.2px;width:47.6px">3.61</span><span style="left:1298.8px;width:38.7px">17.52</span><span style="left:1337.4px;width:38.5px">39.18</span><span style="left:1376.0px;width:38.7px">0.54</span><span style="left:1414.6px;width:38.7px">5.47</span></div>
<div class="r" style="top:231.56px"><span style="left:82.9px;text-align:left;letter-spacing:-0.6px">11/2/2020</span><span style="left:137.4px;width:56.8px">1</span><span style="left:194.3px;width:82.9px">ADD</span><span style="left:277.2px;width:59.4px">450</span><span style="left:336.6px;width:59.8px">30</span><span style="left:396.3px;width:38.7px">0.067</span><span style="left:435.0px;width:38.5px">0.017</span><span style="left:473.5px;width:39.6px;text-align:right">16,667</span><span style="left:517.4px;width:39.5px">98%</span><span style="left:557.0px;width:38.5px">3.63</span><span style="left:595.5px;width:38.7px">10.00</span><span style="left:634.1px;width:39.4px">5.00</span><span style="left:673.5px;width:43.5px">9.00</span><span style="left:717.1px;width:43.5px">5.00</span><span style="left:760.6px;width:43.5px">5.00</span><span style="left:804.1px;width:43.5px">8.00</span><span style="left:847.7px;width:43.5px">8.00</span><span style="left:1108.9px;width:47.6px">7.00</span><span style="left:1156.5px;width:47.6px">7.89</span><span style="left:1204.0px;width:47.2px">1.87</span><span style="left:1251.2px;width:47.6px">1.60</span><span style="left:1298.8px;width:38.7px">3.09</span><span style="left:1337.4px;width:38.5px">12.69</span><span style="left:1376.0px;width:38.7px">0.45</span><span style="left:1414.6px;width:38.7px">1.25</span></div>
<div class="r" style="top:240.33px"><span style="left:82.9px;text-align:left;letter-spacing:-0.6px">11/3/2020</span><span style="left:137.4px;width:56.8px">1</span><span style="left:194.3px;width:82.9px">ABC</span><span style="left:277.2px;width:59.4px">546</span><span style="left:336.6px;width:59.8px">20</span><span style="left:396.3px;width:38.7px">0.037</span><span style="left:435.0px;width:38.5px">0.018</span><span style="left:473.5px;width:39.6px;text-align:right">18,315</span><span style="left:517.4px;width:39.5px">98%</span><span style="left:557.0px;width:38.5px">3.59</span><span style="left:595.5px;width:38.7px">20.00</span><span style="left:634.1px;width:39.4px">15.00</span><span style="left:673.5px;width:43.5px">15.00</span><span style="left:717.1px;width:43.5px">18.00</span><span style="left:760.6px;width:43.5px">18.00</span><span style="left:804.1px;width:43.5px">17.00</span><span style="left:847.7px;width:43.5px">20.00</span><span style="left:1108.9px;width:47.6px">17.60</span><span style="left:1156.5px;width:47.6px">17.37</span><span style="left:1204.0px;width:47.2px">1.82</span><span style="left:1251.2px;width:47.6px">1.80</span><span style="left:1298.8px;width:38.7px">11.97</span><span style="left:1337.4px;width:38.5px">22.77</span><span style="left:1376.0px;width:38.7px">0.46</span><span style="left:1414.6px;width:38.7px">1.45</span></div>
<div class="r" style="top:249.10px"><span style="left:82.9px;text-align:left;letter-spacing:-0.6px">2/18/2018</span><span style="left:137.4px;width:56.8px">2</span><span style="left:194.3px;width:82.9px">ABC</span><span style="left:277.2px;width:59.4px">354</span><span style="left:336.6px;width:59.8px">49</span><span style="left:396.3px;width:38.7px">0.138</span><span style="left:435.0px;width:38.5px">0.069</span><span style="left:473.5px;width:39.6px;text-align:right">69,209</span><span style="left:517.4px;width:39.5px">93%</span><span style="left:557.0px;width:38.5px">2.98</span><span style="left:595.5px;width:38.7px">20.00</span><span style="left:634.1px;width:39.4px">15.00</span><span style="left:673.5px;width:43.5px">17.00</span><span style="left:717.1px;width:43.5px">15.00</span><span style="left:760.6px;width:43.5px">17.00</span><span style="left:804.1px;width:43.5px">17.00</span><span style="left:847.7px;width:43.5px">20.00</span><span style="left:1108.9px;width:47.6px">17.20</span><span style="left:1156.5px;width:47.6px">17.37</span><span style="left:1204.0px;width:47.2px">1.79</span><span style="left:1251.2px;width:47.6px">1.80</span><span style="left:1298.8px;width:38.7px">11.97</span><span style="left:1337.4px;width:38.5px">22.77</span><span style="left:1376.0px;width:38.7px">0.47</span><span style="left:1414.6px;width:38.7px">1.31</span></div>
<div class="r" style="top:257.86px"><span style="left:82.9px;text-align:left;letter-spacing:-0.6px">8/16/2019</span><span style="left:137.4px;width:56.8px">3</span><span style="left:194.3px;width:82.9px">XDC</span><span style="left:277.2px;width:59.4px">433</span><span style="left:336.6px;width:59.8px">29</span><span style="left:396.3px;width:38.7px">0.067</span><span style="left:435.0px;width:38.5px">0.022</span><span style="left:473.5px;width:39.6px;text-align:right">22,325</span><span style="left:517.4px;width:39.5px">98%</span><span style="left:557.0px;width:38.5px">3.51</span><span style="left:595.5px;width:38.7px">33.00</span><span style="left:634.1px;width:39.4px">22.00</span><span style="left:673.5px;width:43.5px">33.00</span><span style="left:717.1px;width:43.5px">29.00</span><span style="left:760.6px;width:43.5px">31.00</span><span style="left:804.1px;width:43.5px">25.00</span><span style="left:847.7px;width:43.5px">24.00</span><span style="left:1108.9px;width:47.6px">28.40</span><span style="left:1156.5px;width:47.6px">28.35</span><span style="left:1204.0px;width:47.2px">3.85</span><span style="left:1251.2px;width:47.6px">3.61</span><span style="left:1298.8px;width:38.7px">17.52</span><span style="left:1337.4px;width:38.5px">39.18</span><span style="left:1376.0px;width:38.7px">0.48</span><span style="left:1414.6px;width:38.7px">5.90</span></div>
<div class="r" style="top:266.62px"><span style="left:82.9px;text-align:left;letter-spacing:-0.6px">8/3/2019</span><span style="left:137.4px;width:56.8px">2</span><span style="left:194.3px;width:82.9px">ABC</span><span style="left:277.2px;width:59.4px">584</span><span style="left:336.6px;width:59.8px">46</span><span style="left:396.3px;width:38.7px">0.079</span><span style="left:435.0px;width:38.5px">0.039</span><span style="left:473.5px;width:39.6px;text-align:right">39,384</span><span style="left:517.4px;width:39.5px">96%</span><span style="left:557.0px;width:38.5px">3.26</span><span style="left:595.5px;width:38.7px">20.00</span><span style="left:634.1px;width:39.4px">15.00</span><span style="left:673.5px;width:43.5px">15.00</span><span style="left:717.1px;width:43.5px">16.00</span><span style="left:760.6px;width:43.5px">16.00</span><span style="left:804.1px;width:43.5px">19.00</span><span style="left:847.7px;width:43.5px">20.00</span><span style="left:1108.9px;width:47.6px">17.20</span><span style="left:1156.5px;width:47.6px">17.37</span><span style="left:1204.0px;width:47.2px">2.17</span><span style="left:1251.2px;width:47.6px">1.80</span><span style="left:1298.8px;width:38.7px">11.97</span><span style="left:1337.4px;width:38.5px">22.77</span><span style="left:1376.0px;width:38.7px">0.38</span><span style="left:1414.6px;width:38.7px">1.59</span></div>
<div class="r" style="top:275.39px"><span style="left:82.9px;text-align:left;letter-spacing:-0.6px">12/2/2018</span><span style="left:137.4px;width:56.8px">1</span><span style="left:194.3px;width:82.9px">ADD</span><span style="left:277.2px;width:59.4px">438</span><span style="left:336.6px;width:59.8px">37</span><span style="left:396.3px;width:38.7px">0.084</span><span style="left:435.0px;width:38.5px">0.021</span><span style="left:473.5px;width:39.6px;text-align:right">21,119</span><span style="left:517.4px;width:39.5px">98%</span><span style="left:557.0px;width:38.5px">3.53</span><span style="left:595.5px;width:38.7px">10.00</span><span style="left:634.1px;width:39.4px">5.00</span><span style="left:673.5px;width:43.5px">8.00</span><span style="left:717.1px;width:43.5px">5.00</span><span style="left:760.6px;width:43.5px">5.00</span><span style="left:804.1px;width:43.5px">7.00</span><span style="left:847.7px;width:43.5px">7.00</span><span style="left:1108.9px;width:47.6px">6.40</span><span style="left:1156.5px;width:47.6px">7.89</span><span style="left:1204.0px;width:47.2px">1.34</span><span style="left:1251.2px;width:47.6px">1.60</span><span style="left:1298.8px;width:38.7px">3.09</span><span style="left:1337.4px;width:38.5px">12.69</span><span style="left:1376.0px;width:38.7px">0.62</span><span style="left:1414.6px;width:38.7px">0.63</span></div>
<div class="r" style="top:284.16px"><span style="left:82.9px;text-align:left;letter-spacing:-0.6px">1/4/2020</span><span style="left:137.4px;width:56.8px">1</span><span style="left:194.3px;width:82.9px">ABC</span><span style="left:277.2px;width:59.4px">564</span><span style="left:336.6px;width:59.8px">26</span><span style="left:396.3px;width:38.7px">0.046</span><span style="left:435.0px;width:38.5px">0.023</span><span style="left:473.5px;width:39.6px;text-align:right">23,050</span><span style="left:517.4px;width:39.5px">98%</span><span style="left:557.0px;width:38.5px">3.49</span><span style="left:595.5px;width:38.7px">20.00</span><span style="left:634.1px;width:39.4px">15.00</span><span style="left:673.5px;width:43.5px">16.00</span><span style="left:717.1px;width:43.5px">18.00</span><span style="left:760.6px;width:43.5px">19.00</span><span style="left:804.1px;width:43.5px">19.00</span><span style="left:847.7px;width:43.5px">19.00</span><span style="left:1108.9px;width:47.6px">18.20</span><span style="left:1156.5px;width:47.6px">17.37</span><span style="left:1204.0px;width:47.2px">1.30</span><span style="left:1251.2px;width:47.6px">1.80</span><span style="left:1298.8px;width:38.7px">11.97</span><span style="left:1337.4px;width:38.5px">22.77</span><span style="left:1376.0px;width:38.7px">0.64</span><span style="left:1414.6px;width:38.7px">0.78</span></div>
<div class="r" style="top:292.92px"><span style="left:82.9px;text-align:left;letter-spacing:-0.6px">8/13/2019</span><span style="left:137.4px;width:56.8px">2</span><span style="left:194.3px;width:82.9px">ABC</span><span style="left:277.2px;width:59.4px">406</span><span style="left:336.6px;width:59.8px">33</span><span style="left:396.3px;width:38.7px">0.081</span><span style="left:435.0px;width:38.5px">0.041</span><span style="left:473.5px;width:39.6px;text-align:right">40,640</span><span style="left:517.4px;width:39.5px">96%</span><span style="left:557.0px;width:38.5px">3.24</span><span style="left:595.5px;width:38.7px">20.00</span><span style="left:634.1px;width:39.4px">15.00</span><span style="left:673.5px;width:43.5px">15.00</span><span style="left:717.1px;width:43.5px">16.00</span><span style="left:760.6px;width:43.5px">20.00</span><span style="left:804.1px;width:43.5px">17.00</span><span style="left:847.7px;width:43.5px">20.00</span><span style="left:1108.9px;width:47.6px">17.60</span><span style="left:1156.5px;width:47.6px">17.37</span><span style="left:1204.0px;width:47.2px">2.30</span><span style="left:1251.2px;width:47.6px">1.80</span><span style="left:1298.8px;width:38.7px">11.97</span><span style="left:1337.4px;width:38.5px">22.77</span><span style="left:1376.0px;width:38.7px">0.36</span><span style="left:1414.6px;width:38.7px">1.84</span></div>
<div class="r" style="top:301.69px"><span style="left:82.9px;text-align:left;letter-spacing:-0.6px">12/4/2019</span><span style="left:137.4px;width:56.8px">1</span><span style="left:194.3px;width:82.9px">ADD</span><span style="left:277.2px;width:59.4px">591</span><span style="left:336.6px;width:59.8px">43</span><span style="left:396.3px;width:38.7px">0.073</span><span style="left:435.0px;width:38.5px">0.018</span><span style="left:473.5px;width:39.6px;text-align:right">18,190</span><span style="left:517.4px;width:39.5px">98%</span><span style="left:557.0px;width:38.5px">3.59</span><span style="left:595.5px;width:38.7px">10.00</span><span style="left:634.1px;width:39.4px">5.00</span><span style="left:673.5px;width:43.5px">7.00</span><span style="left:717.1px;width:43.5px">5.00</span><span style="left:760.6px;width:43.5px">7.00</span><span style="left:804.1px;width:43.5px">7.00</span><span style="left:847.7px;width:43.5px">9.00</span><span style="left:1108.9px;width:47.6px">7.00</span><span style="left:1156.5px;width:47.6px">7.89</span><span style="left:1204.0px;width:47.2px">1.41</span><span style="left:1251.2px;width:47.6px">1.60</span><span style="left:1298.8px;width:38.7px">3.09</span><span style="left:1337.4px;width:38.5px">12.69</span><span style="left:1376.0px;width:38.7px">0.59</span><span style="left:1414.6px;width:38.7px">0.94</span></div>
<div class="r" style="top:310.45px"><span style="left:82.9px;text-align:left;letter-spacing:-0.6px">2/23/2020</span><span style="left:137.4px;width:56.8px">1</span><span style="left:194.3px;width:82.9px">ADD</span><span style="left:277.2px;width:59.4px">518</span><span style="left:336.6px;width:59.8px">39</span><span style="left:396.3px;width:38.7px">0.075</span><span style="left:435.0px;width:38.5px">0.019</span><span style="left:473.5px;width:39.6px;text-align:right">18,822</span><span style="left:517.4px;width:39.5px">98%</span><span style="left:557.0px;width:38.5px">3.58</span><span style="left:595.5px;width:38.7px">10.00</span><span style="left:634.1px;width:39.4px">5.00</span><span style="left:673.5px;width:43.5px">8.00</span><span style="left:717.1px;width:43.5px">8.00</span><span style="left:760.6px;width:43.5px">9.00</span><span style="left:804.1px;width:43.5px">10.00</span><span style="left:847.7px;width:43.5px">9.00</span><span style="left:1108.9px;width:47.6px">8.80</span><span style="left:1156.5px;width:47.6px">7.89</span><span style="left:1204.0px;width:47.2px">0.84</span><span style="left:1251.2px;width:47.6px">1.60</span><span style="left:1298.8px;width:38.7px">3.09</span><span style="left:1337.4px;width:38.5px">12.69</span><span style="left:1376.0px;width:38.7px">1.00</span><span style="left:1414.6px;width:38.7px">0.33</span></div>
<div class="r" style="top:319.22px"><span style="left:82.9px;text-align:left;letter-spacing:-0.6px">1/1/2019</span><span style="left:137.4px;width:56.8px">1</span><span style="left:194.3px;width:82.9px">XDC</span><span style="left:277.2px;width:59.4px">388</span><span style="left:336.6px;width:59.8px">44</span><span style="left:396.3px;width:38.7px">0.113</span><span style="left:435.0px;width:38.5px">0.038</span><span style="left:473.5px;width:39.6px;text-align:right">37,801</span><span style="left:517.4px;width:39.5px">96%</span><span style="left:557.0px;width:38.5px">3.28</span><span style="left:595.5px;width:38.7px">33.00</span><span style="left:634.1px;width:39.4px">22.00</span><span style="left:673.5px;width:43.5px">23.00</span><span style="left:717.1px;width:43.5px">29.00</span><span style="left:760.6px;width:43.5px">30.00</span><span style="left:804.1px;width:43.5px">24.00</span><span style="left:847.7px;width:43.5px">23.00</span><span style="left:1108.9px;width:47.6px">25.80</span><span style="left:1156.5px;width:47.6px">28.35</span><span style="left:1204.0px;width:47.2px">3.42</span><span style="left:1251.2px;width:47.6px">3.61</span><span style="left:1298.8px;width:38.7px">17.52</span><span style="left:1337.4px;width:38.5px">39.18</span><span style="left:1376.0px;width:38.7px">0.54</span><span style="left:1414.6px;width:38.7px">4.33</span></div>
<div class="r" style="top:327.98px"><span style="left:82.9px;text-align:left;letter-spacing:-0.6px">3/23/2020</span><span style="left:137.4px;width:56.8px">1</span><span style="left:194.3px;width:82.9px">XDC</span><span style="left:277.2px;width:59.4px">450</span><span style="left:336.6px;width:59.8px">34</span><span style="left:396.3px;width:38.7px">0.076</span><span style="left:435.0px;width:38.5px">0.025</span><span style="left:473.5px;width:39.6px;text-align:right">25,185</span><span style="left:517.4px;width:39.5px">97%</span><span style="left:557.0px;width:38.5px">3.46</span><span style="left:595.5px;width:38.7px">33.00</span><span style="left:634.1px;width:39.4px">22.00</span><span style="left:673.5px;width:43.5px">23.00</span><span style="left:717.1px;width:43.5px">22.00</span><span style="left:760.6px;width:43.5px">29.00</span><span style="left:804.1px;width:43.5px">33.00</span><span style="left:847.7px;width:43.5px">25.00</span><span style="left:1108.9px;width:47.6px">26.40</span><span style="left:1156.5px;width:47.6px">28.35</span><span style="left:1204.0px;width:47.2px">4.56</span><span style="left:1251.2px;width:47.6px">3.61</span><span style="left:1298.8px;width:38.7px">17.52</span><span style="left:1337.4px;width:38.5px">39.18</span><span style="left:1376.0px;width:38.7px">0.40</span><span style="left:1414.6px;width:38.7px">6.69</span></div>
<div class="r" style="top:336.75px"><span style="left:82.9px;text-align:left;letter-spacing:-0.6px">5/23/2018</span><span style="left:137.4px;width:56.8px">1</span><span style="left:194.3px;width:82.9px">XDC</span><span style="left:277.2px;width:59.4px">469</span><span style="left:336.6px;width:59.8px">47</span><span style="left:396.3px;width:38.7px">0.100</span><span style="left:435.0px;width:38.5px">0.033</span><span style="left:473.5px;width:39.6px;text-align:right">33,404</span><span style="left:517.4px;width:39.5px">97%</span><span style="left:557.0px;width:38.5px">3.33</span><span style="left:595.5px;width:38.7px">33.00</span><span style="left:634.1px;width:39.4px">22.00</span><span style="left:673.5px;width:43.5px">26.00</span><span style="left:717.1px;width:43.5px">29.00</span><span style="left:760.6px;width:43.5px">22.00</span><span style="left:804.1px;width:43.5px">32.00</span><span style="left:847.7px;width:43.5px">28.00</span><span style="left:1108.9px;width:47.6px">27.40</span><span style="left:1156.5px;width:47.6px">28.35</span><span style="left:1204.0px;width:47.2px">3.71</span><span style="left:1251.2px;width:47.6px">3.61</span><span style="left:1298.8px;width:38.7px">17.52</span><span style="left:1337.4px;width:38.5px">39.18</span><span style="left:1376.0px;width:38.7px">0.49</span><span style="left:1414.6px;width:38.7px">6.69</span></div>
<div class="r" style="top:345.51px"><span style="left:82.9px;text-align:left;letter-spacing:-0.6px">9/21/2018</span><span style="left:137.4px;width:56.8px">2</span><span style="left:194.3px;width:82.9px">ADD</span><span style="left:277.2px;width:59.4px">588</span><span style="left:336.6px;width:59.8px">24</span><span style="left:396.3px;width:38.7px">0.041</span><span style="left:435.0px;width:38.5px">0.010</span><span style="left:473.5px;width:39.6px;text-align:right">10,204</span><span style="left:517.4px;width:39.5px">99%</span><span style="left:557.0px;width:38.5px">3.82</span><span style="left:595.5px;width:38.7px">10.00</span><span style="left:634.1px;width:39.4px">5.00</span><span style="left:673.5px;width:43.5px">6.00</span><span style="left:717.1px;width:43.5px">7.00</span><span style="left:760.6px;width:43.5px">7.00</span><span style="left:804.1px;width:43.5px">10.00</span><span style="left:847.7px;width:43.5px">9.00</span><span style="left:1108.9px;width:47.6px">7.80</span><span style="left:1156.5px;width:47.6px">7.89</span><span style="left:1204.0px;width:47.2px">1.64</span><span style="left:1251.2px;width:47.6px">1.60</span><span style="left:1298.8px;width:38.7px">3.09</span><span style="left:1337.4px;width:38.5px">12.69</span><span style="left:1376.0px;width:38.7px">0.51</span><span style="left:1414.6px;width:38.7px">1.20</span></div>
<div class="r" style="top:354.28px"><span style="left:82.9px;text-align:left;letter-spacing:-0.6px">1/6/2020</span><span style="left:137.4px;width:56.8px">2</span><span style="left:194.3px;width:82.9px">ABC</span><span style="left:277.2px;width:59.4px">577</span><span style="left:336.6px;width:59.8px">49</span><span style="left:396.3px;width:38.7px">0.085</span><span style="left:435.0px;width:38.5px">0.042</span><span style="left:473.5px;width:39.6px;text-align:right">42,461</span><span style="left:517.4px;width:39.5px">96%</span><span style="left:557.0px;width:38.5px">3.22</span><span style="left:595.5px;width:38.7px">20.00</span><span style="left:634.1px;width:39.4px">15.00</span><span style="left:673.5px;width:43.5px">19.00</span><span style="left:717.1px;width:43.5px">19.00</span><span style="left:760.6px;width:43.5px">20.00</span><span style="left:804.1px;width:43.5px">17.00</span><span style="left:847.7px;width:43.5px">19.00</span><span style="left:1108.9px;width:47.6px">18.80</span><span style="left:1156.5px;width:47.6px">17.37</span><span style="left:1204.0px;width:47.2px">1.10</span><span style="left:1251.2px;width:47.6px">1.80</span><span style="left:1298.8px;width:38.7px">11.97</span><span style="left:1337.4px;width:38.5px">22.77</span><span style="left:1376.0px;width:38.7px">0.76</span><span style="left:1414.6px;width:38.7px">0.44</span></div>
<div class="r" style="top:363.04px"><span style="left:82.9px;text-align:left;letter-spacing:-0.6px">6/13/2018</span><span style="left:137.4px;width:56.8px">3</span><span style="left:194.3px;width:82.9px">ABC</span><span style="left:277.2px;width:59.4px">472</span><span style="left:336.6px;width:59.8px">33</span><span style="left:396.3px;width:38.7px">0.070</span><span style="left:435.0px;width:38.5px">0.035</span><span style="left:473.5px;width:39.6px;text-align:right">34,958</span><span style="left:517.4px;width:39.5px">97%</span><span style="left:557.0px;width:38.5px">3.31</span><span style="left:595.5px;width:38.7px">20.00</span><span style="left:634.1px;width:39.4px">15.00</span><span style="left:673.5px;width:43.5px">15.00</span><span style="left:717.1px;width:43.5px">20.00</span><span style="left:760.6px;width:43.5px">15.00</span><span style="left:804.1px;width:43.5px">17.00</span><span style="left:847.7px;width:43.5px">19.00</span><span style="left:1108.9px;width:47.6px">17.20</span><span style="left:1156.5px;width:47.6px">17.37</span><span style="left:1204.0px;width:47.2px">2.28</span><span style="left:1251.2px;width:47.6px">1.80</span><span style="left:1298.8px;width:38.7px">11.97</span><span style="left:1337.4px;width:38.5px">22.77</span><span style="left:1376.0px;width:38.7px">0.37</span><span style="left:1414.6px;width:38.7px">1.67</span></div>
<div class="r" style="top:371.81px"><span style="left:82.9px;text-align:left;letter-spacing:-0.6px">6/21/2019</span><span style="left:137.4px;width:56.8px">1</span><span style="left:194.3px;width:82.9px">XDC</span><span style="left:277.2px;width:59.4px">380</span><span style="left:336.6px;width:59.8px">27</span><span style="left:396.3px;width:38.7px">0.071</span><span style="left:435.0px;width:38.5px">0.024</span><span style="left:473.5px;width:39.6px;text-align:right">23,684</span><span style="left:517.4px;width:39.5px">98%</span><span style="left:557.0px;width:38.5px">3.48</span><span style="left:595.5px;width:38.7px">33.00</span><span style="left:634.1px;width:39.4px">22.00</span><span style="left:673.5px;width:43.5px">32.00</span><span style="left:717.1px;width:43.5px">27.00</span><span style="left:760.6px;width:43.5px">25.00</span><span style="left:804.1px;width:43.5px">26.00</span><span style="left:847.7px;width:43.5px">27.00</span><span style="left:1108.9px;width:47.6px">27.40</span><span style="left:1156.5px;width:47.6px">28.35</span><span style="left:1204.0px;width:47.2px">2.70</span><span style="left:1251.2px;width:47.6px">3.61</span><span style="left:1298.8px;width:38.7px">17.52</span><span style="left:1337.4px;width:38.5px">39.18</span><span style="left:1376.0px;width:38.7px">0.68</span><span style="left:1414.6px;width:38.7px">4.86</span></div>
<div class="r" style="top:380.57px"><span style="left:82.9px;text-align:left;letter-spacing:-0.6px">1/29/2020</span><span style="left:137.4px;width:56.8px">1</span><span style="left:194.3px;width:82.9px">ACC</span><span style="left:277.2px;width:59.4px">431</span><span style="left:336.6px;width:59.8px">43</span><span style="left:396.3px;width:38.7px">0.100</span><span style="left:435.0px;width:38.5px">0.050</span><span style="left:473.5px;width:39.6px;text-align:right">49,884</span><span style="left:517.4px;width:39.5px">95%</span><span style="left:557.0px;width:38.5px">3.15</span><span style="left:595.5px;width:38.7px">35.00</span><span style="left:634.1px;width:39.4px">25.00</span><span style="left:673.5px;width:43.5px">26.00</span><span style="left:717.1px;width:43.5px">25.00</span><span style="left:760.6px;width:43.5px">26.00</span><span style="left:804.1px;width:43.5px">29.00</span><span style="left:847.7px;width:43.5px">28.00</span><span style="left:1108.9px;width:47.6px">26.80</span><span style="left:1156.5px;width:47.6px">30.19</span><span style="left:1204.0px;width:47.2px">1.64</span><span style="left:1251.2px;width:47.6px">2.89</span><span style="left:1298.8px;width:38.7px">21.53</span><span style="left:1337.4px;width:38.5px">38.86</span><span style="left:1376.0px;width:38.7px">1.01</span><span style="left:1414.6px;width:38.7px">0.99</span></div>
<div class="r" style="top:389.34px"><span style="left:82.9px;text-align:left;letter-spacing:-0.6px">10/29/2020</span><span style="left:137.4px;width:56.8px">2</span><span style="left:194.3px;width:82.9px">XDC</span><span style="left:277.2px;width:59.4px">352</span><span style="left:336.6px;width:59.8px">34</span><span style="left:396.3px;width:38.7px">0.097</span><span style="left:435.0px;width:38.5px">0.032</span><span style="left:473.5px;width:39.6px;text-align:right">32,197</span><span style="left:517.4px;width:39.5px">97%</span><span style="left:557.0px;width:38.5px">3.35</span><span style="left:595.5px;width:38.7px">33.00</span><span style="left:634.1px;width:39.4px">22.00</span><span style="left:673.5px;width:43.5px">33.00</span><span style="left:717.1px;width:43.5px">29.00</span><span style="left:760.6px;width:43.5px">26.00</span><span style="left:804.1px;width:43.5px">27.00</span><span style="left:847.7px;width:43.5px">33.00</span><span style="left:1108.9px;width:47.6px">29.60</span><span style="left:1156.5px;width:47.6px">28.35</span><span style="left:1204.0px;width:47.2px">3.29</span><span style="left:1251.2px;width:47.6px">3.61</span><span style="left:1298.8px;width:38.7px">17.52</span><span style="left:1337.4px;width:38.5px">39.18</span><span style="left:1376.0px;width:38.7px">0.56</span><span style="left:1414.6px;width:38.7px">3.72</span></div>
<div class="r" style="top:398.10px"><span style="left:82.9px;text-align:left;letter-spacing:-0.6px">9/16/2018</span><span style="left:137.4px;width:56.8px">3</span><span style="left:194.3px;width:82.9px">ADD</span><span style="left:277.2px;width:59.4px">513</span><span style="left:336.6px;width:59.8px">49</span><span style="left:396.3px;width:38.7px">0.096</span><span style="left:435.0px;width:38.5px">0.024</span><span style="left:473.5px;width:39.6px;text-align:right">23,879</span><span style="left:517.4px;width:39.5px">98%</span><span style="left:557.0px;width:38.5px">3.48</span><span style="left:595.5px;width:38.7px">10.00</span><span style="left:634.1px;width:39.4px">5.00</span><span style="left:673.5px;width:43.5px">10.00</span><span style="left:717.1px;width:43.5px">7.00</span><span style="left:760.6px;width:43.5px">8.00</span><span style="left:804.1px;width:43.5px">5.00</span><span style="left:847.7px;width:43.5px">8.00</span><span style="left:1108.9px;width:47.6px">7.60</span><span style="left:1156.5px;width:47.6px">7.89</span><span style="left:1204.0px;width:47.2px">1.82</span><span style="left:1251.2px;width:47.6px">1.60</span><span style="left:1298.8px;width:38.7px">3.09</span><span style="left:1337.4px;width:38.5px">12.69</span><span style="left:1376.0px;width:38.7px">0.46</span><span style="left:1414.6px;width:38.7px">1.45</span></div>
<div class="r" style="top:406.87px"><span style="left:82.9px;text-align:left;letter-spacing:-0.6px">1/21/2018</span><span style="left:137.4px;width:56.8px">1</span><span style="left:194.3px;width:82.9px">ABC</span><span style="left:277.2px;width:59.4px">407</span><span style="left:336.6px;width:59.8px">43</span><span style="left:396.3px;width:38.7px">0.106</span><span style="left:435.0px;width:38.5px">0.053</span><span style="left:473.5px;width:39.6px;text-align:right">52,826</span><span style="left:517.4px;width:39.5px">95%</span><span style="left:557.0px;width:38.5px">3.12</span><span style="left:595.5px;width:38.7px">20.00</span><span style="left:634.1px;width:39.4px">15.00</span><span style="left:673.5px;width:43.5px">19.00</span><span style="left:717.1px;width:43.5px">20.00</span><span style="left:760.6px;width:43.5px">20.00</span><span style="left:804.1px;width:43.5px">20.00</span><span style="left:847.7px;width:43.5px">16.00</span><span style="left:1108.9px;width:47.6px">19.00</span><span style="left:1156.5px;width:47.6px">17.37</span><span style="left:1204.0px;width:47.2px">1.73</span><span style="left:1251.2px;width:47.6px">1.80</span><span style="left:1298.8px;width:38.7px">11.97</span><span style="left:1337.4px;width:38.5px">22.77</span><span style="left:1376.0px;width:38.7px">0.48</span><span style="left:1414.6px;width:38.7px">0.58</span></div>
<div class="r" style="top:415.63px"><span style="left:82.9px;text-align:left;letter-spacing:-0.6px">8/16/2020</span><span style="left:137.4px;width:56.8px">1</span><span style="left:194.3px;width:82.9px">ACC</span><span style="left:277.2px;width:59.4px">592</span><span style="left:336.6px;width:59.8px">36</span><span style="left:396.3px;width:38.7px">0.061</span><span style="left:435.0px;width:38.5px">0.030</span><span style="left:473.5px;width:39.6px;text-align:right">30,405</span><span style="left:517.4px;width:39.5px">97%</span><span style="left:557.0px;width:38.5px">3.37</span><span style="left:595.5px;width:38.7px">35.00</span><span style="left:634.1px;width:39.4px">25.00</span><span style="left:673.5px;width:43.5px">34.00</span><span style="left:717.1px;width:43.5px">35.00</span><span style="left:760.6px;width:43.5px">33.00</span><span style="left:804.1px;width:43.5px">35.00</span><span style="left:847.7px;width:43.5px">28.00</span><span style="left:1108.9px;width:47.6px">33.00</span><span style="left:1156.5px;width:47.6px">30.19</span><span style="left:1204.0px;width:47.2px">2.92</span><span style="left:1251.2px;width:47.6px">2.89</span><span style="left:1298.8px;width:38.7px">21.53</span><span style="left:1337.4px;width:38.5px">38.86</span><span style="left:1376.0px;width:38.7px">0.57</span><span style="left:1414.6px;width:38.7px">1.94</span></div>
<div class="r" style="top:424.40px"><span style="left:82.9px;text-align:left;letter-spacing:-0.6px">1/11/2018</span><span style="left:137.4px;width:56.8px">1</span><span style="left:194.3px;width:82.9px">ACC</span><span style="left:277.2px;width:59.4px">548</span><span style="left:336.6px;width:59.8px">48</span><span style="left:396.3px;width:38.7px">0.088</span><span style="left:435.0px;width:38.5px">0.044</span><span style="left:473.5px;width:39.6px;text-align:right">43,796</span><span style="left:517.4px;width:39.5px">96%</span><span style="left:557.0px;width:38.5px">3.21</span><span style="left:595.5px;width:38.7px">35.00</span><span style="left:634.1px;width:39.4px">25.00</span><span style="left:673.5px;width:43.5px">25.00</span><span style="left:717.1px;width:43.5px">30.00</span><span style="left:760.6px;width:43.5px">30.00</span><span style="left:804.1px;width:43.5px">34.00</span><span style="left:847.7px;width:43.5px">34.00</span><span style="left:1108.9px;width:47.6px">30.60</span><span style="left:1156.5px;width:47.6px">30.19</span><span style="left:1204.0px;width:47.2px">3.71</span><span style="left:1251.2px;width:47.6px">2.89</span><span style="left:1298.8px;width:38.7px">21.53</span><span style="left:1337.4px;width:38.5px">38.86</span><span style="left:1376.0px;width:38.7px">0.45</span><span style="left:1414.6px;width:38.7px">5.45</span></div>
<div class="r" style="top:433.16px"><span style="left:82.9px;text-align:left;letter-spacing:-0.6px">4/7/2018</span><span style="left:137.4px;width:56.8px">2</span><span style="left:194.3px;width:82.9px">ADD</span><span style="left:277.2px;width:59.4px">393</span><span style="left:336.6px;width:59.8px">22</span><span style="left:396.3px;width:38.7px">0.056</span><span style="left:435.0px;width:38.5px">0.014</span><span style="left:473.5px;width:39.6px;text-align:right">13,995</span><span style="left:517.4px;width:39.5px">99%</span><span style="left:557.0px;width:38.5px">3.70</span><span style="left:595.5px;width:38.7px">10.00</span><span style="left:634.1px;width:39.4px">5.00</span><span style="left:673.5px;width:43.5px">9.00</span><span style="left:717.1px;width:43.5px">5.00</span><span style="left:760.6px;width:43.5px">7.00</span><span style="left:804.1px;width:43.5px">5.00</span><span style="left:847.7px;width:43.5px">7.00</span><span style="left:1108.9px;width:47.6px">6.60</span><span style="left:1156.5px;width:47.6px">7.89</span><span style="left:1204.0px;width:47.2px">1.67</span><span style="left:1251.2px;width:47.6px">1.60</span><span style="left:1298.8px;width:38.7px">3.09</span><span style="left:1337.4px;width:38.5px">12.69</span><span style="left:1376.0px;width:38.7px">0.50</span><span style="left:1414.6px;width:38.7px">0.89</span></div>
<div class="r" style="top:441.93px"><span style="left:82.9px;text-align:left;letter-spacing:-0.6px">8/3/2020</span><span style="left:137.4px;width:56.8px">3</span><span style="left:194.3px;width:82.9px">ABC</span><span style="left:277.2px;width:59.4px">598</span><span style="left:336.6px;width:59.8px">36</span><span style="left:396.3px;width:38.7px">0.060</span><span style="left:435.0px;width:38.5px">0.030</span><span style="left:473.5px;width:39.6px;text-align:right">30,100</span><span style="left:517.4px;width:39.5px">97%</span><span style="left:557.0px;width:38.5px">3.38</span><span style="left:595.5px;width:38.7px">20.00</span><span style="left:634.1px;width:39.4px">15.00</span><span style="left:673.5px;width:43.5px">20.00</span><span style="left:717.1px;width:43.5px">17.00</span><span style="left:760.6px;width:43.5px">19.00</span><span style="left:804.1px;width:43.5px">15.00</span><span style="left:847.7px;width:43.5px">17.00</span><span style="left:1108.9px;width:47.6px">17.60</span><span style="left:1156.5px;width:47.6px">17.37</span><span style="left:1204.0px;width:47.2px">1.95</span><span style="left:1251.2px;width:47.6px">1.80</span><span style="left:1298.8px;width:38.7px">11.97</span><span style="left:1337.4px;width:38.5px">22.77</span><span style="left:1376.0px;width:38.7px">0.43</span><span style="left:1414.6px;width:38.7px">1.56</span></div>
<div class="r" style="top:450.69px"><span style="left:82.9px;text-align:left;letter-spacing:-0.6px">1/29/2018</span><span style="left:137.4px;width:56.8px">2</span><span style="left:194.3px;width:82.9px">ABC</span><span style="left:277.2px;width:59.4px">419</span><span style="left:336.6px;width:59.8px">30</span><span style="left:396.3px;width:38.7px">0.072</span><span style="left:435.0px;width:38.5px">0.036</span><span style="left:473.5px;width:39.6px;text-align:right">35,800</span><span style="left:517.4px;width:39.5px">96%</span><span style="left:557.0px;width:38.5px">3.30</span><span style="left:595.5px;width:38.7px">20.00</span><span style="left:634.1px;width:39.4px">15.00</span><span style="left:673.5px;width:43.5px">18.00</span><span style="left:717.1px;width:43.5px">20.00</span><span style="left:760.6px;width:43.5px">15.00</span><span style="left:804.1px;width:43.5px">15.00</span><span style="left:847.7px;width:43.5px">15.00</span><span style="left:1108.9px;width:47.6px">16.60</span><span style="left:1156.5px;width:47.6px">17.37</span><span style="left:1204.0px;width:47.2px">2.30</span><span style="left:1251.2px;width:47.6px">1.80</span><span style="left:1298.8px;width:38.7px">11.97</span><span style="left:1337.4px;width:38.5px">22.77</span><span style="left:1376.0px;width:38.7px">0.36</span><span style="left:1414.6px;width:38.7px">1.23</span></div>
<div class="r" style="top:459.46px"><span style="left:82.9px;text-align:left;letter-spacing:-0.6px">8/21/2020</span><span style="left:137.4px;width:56.8px">2</span><span style="left:194.3px;width:82.9px">ACC</span><span style="left:277.2px;width:59.4px">375</span><span style="left:336.6px;width:59.8px">30</span><span style="left:396.3px;width:38.7px">0.080</span><span style="left:435.0px;width:38.5px">0.040</span><span style="left:473.5px;width:39.6px;text-align:right">40,000</span><span style="left:517.4px;width:39.5px">96%</span><span style="left:557.0px;width:38.5px">3.25</span><span style="left:595.5px;width:38.7px">35.00</span><span style="left:634.1px;width:39.4px">25.00</span><span style="left:673.5px;width:43.5px">30.00</span><span style="left:717.1px;width:43.5px">27.00</span><span style="left:760.6px;width:43.5px">26.00</span><span style="left:804.1px;width:43.5px">34.00</span><span style="left:847.7px;width:43.5px">29.00</span><span style="left:1108.9px;width:47.6px">29.20</span><span style="left:1156.5px;width:47.6px">30.19</span><span style="left:1204.0px;width:47.2px">3.11</span><span style="left:1251.2px;width:47.6px">2.89</span><span style="left:1298.8px;width:38.7px">21.53</span><span style="left:1337.4px;width:38.5px">38.86</span><span style="left:1376.0px;width:38.7px">0.54</span><span style="left:1414.6px;width:38.7px">4.36</span></div>
<div class="r" style="top:468.22px"><span style="left:82.9px;text-align:left;letter-spacing:-0.6px">5/1/2020</span><span style="left:137.4px;width:56.8px">3</span><span style="left:194.3px;width:82.9px">ACC</span><span style="left:277.2px;width:59.4px">571</span><span style="left:336.6px;width:59.8px">49</span><span style="left:396.3px;width:38.7px">0.086</span><span style="left:435.0px;width:38.5px">0.043</span><span style="left:473.5px;width:39.6px;text-align:right">42,907</span><span style="left:517.4px;width:39.5px">96%</span><span style="left:557.0px;width:38.5px">3.22</span><span style="left:595.5px;width:38.7px">35.00</span><span style="left:634.1px;width:39.4px">25.00</span><span style="left:673.5px;width:43.5px">32.00</span><span style="left:717.1px;width:43.5px">27.00</span><span style="left:760.6px;width:43.5px">34.00</span><span style="left:804.1px;width:43.5px">33.00</span><span style="left:847.7px;width:43.5px">28.00</span><span style="left:1108.9px;width:47.6px">30.80</span><span style="left:1156.5px;width:47.6px">30.19</span><span style="left:1204.0px;width:47.2px">3.11</span><span style="left:1251.2px;width:47.6px">2.89</span><span style="left:1298.8px;width:38.7px">21.53</span><span style="left:1337.4px;width:38.5px">38.86</span><span style="left:1376.0px;width:38.7px">0.54</span><span style="left:1414.6px;width:38.7px">4.36</span></div>
<div class="r" style="top:476.99px"><span style="left:82.9px;text-align:left;letter-spacing:-0.6px">2/13/2018</span><span style="left:137.4px;width:56.8px">1</span><span style="left:194.3px;width:82.9px">ACC</span><span style="left:277.2px;width:59.4px">517</span><span style="left:336.6px;width:59.8px">20</span><span style="left:396.3px;width:38.7px">0.039</span><span style="left:435.0px;width:38.5px">0.019</span><span style="left:473.5px;width:39.6px;text-align:right">19,342</span><span style="left:517.4px;width:39.5px">98%</span><span style="left:557.0px;width:38.5px">3.57</span><span style="left:595.5px;width:38.7px">35.00</span><span style="left:634.1px;width:39.4px">25.00</span><span style="left:673.5px;width:43.5px">25.00</span><span style="left:717.1px;width:43.5px">32.00</span><span style="left:760.6px;width:43.5px">32.00</span><span style="left:804.1px;width:43.5px">30.00</span><span style="left:847.7px;width:43.5px">31.00</span><span style="left:1108.9px;width:47.6px">30.00</span><span style="left:1156.5px;width:47.6px">30.19</span><span style="left:1204.0px;width:47.2px">2.92</span><span style="left:1251.2px;width:47.6px">2.89</span><span style="left:1298.8px;width:38.7px">21.53</span><span style="left:1337.4px;width:38.5px">38.86</span><span style="left:1376.0px;width:38.7px">0.57</span><span style="left:1414.6px;width:38.7px">4.86</span></div>
<div class="r" style="top:485.75px"><span style="left:82.9px;text-align:left;letter-spacing:-0.6px">3/12/2018</span><span style="left:137.4px;width:56.8px">3</span><span style="left:194.3px;width:82.9px">ADD</span><span style="left:277.2px;width:59.4px">365</span><span style="left:336.6px;width:59.8px">48</span><span style="left:396.3px;width:38.7px">0.132</span><span style="left:435.0px;width:38.5px">0.033</span><span style="left:473.5px;width:39.6px;text-align:right">32,877</span><span style="left:517.4px;width:39.5px">97%</span><span style="left:557.0px;width:38.5px">3.34</span><span style="left:595.5px;width:38.7px">10.00</span><span style="left:634.1px;width:39.4px">5.00</span><span style="left:673.5px;width:43.5px">5.00</span><span style="left:717.1px;width:43.5px">7.00</span><span style="left:760.6px;width:43.5px">5.00</span><span style="left:804.1px;width:43.5px">5.00</span><span style="left:847.7px;width:43.5px">9.00</span><span style="left:1108.9px;width:47.6px">6.20</span><span style="left:1156.5px;width:47.6px">7.89</span><span style="left:1204.0px;width:47.2px">1.79</span><span style="left:1251.2px;width:47.6px">1.60</span><span style="left:1298.8px;width:38.7px">3.09</span><span style="left:1337.4px;width:38.5px">12.69</span><span style="left:1376.0px;width:38.7px">0.47</span><span style="left:1414.6px;width:38.7px">0.72</span></div>
<div class="r" style="top:494.52px"><span style="left:82.9px;text-align:left;letter-spacing:-0.6px">7/17/2018</span><span style="left:137.4px;width:56.8px">3</span><span style="left:194.3px;width:82.9px">ABC</span><span style="left:277.2px;width:59.4px">438</span><span style="left:336.6px;width:59.8px">41</span><span style="left:396.3px;width:38.7px">0.094</span><span style="left:435.0px;width:38.5px">0.047</span><span style="left:473.5px;width:39.6px;text-align:right">46,804</span><span style="left:517.4px;width:39.5px">95%</span><span style="left:557.0px;width:38.5px">3.18</span><span style="left:595.5px;width:38.7px">20.00</span><span style="left:634.1px;width:39.4px">15.00</span><span style="left:673.5px;width:43.5px">20.00</span><span style="left:717.1px;width:43.5px">18.00</span><span style="left:760.6px;width:43.5px">20.00</span><span style="left:804.1px;width:43.5px">19.00</span><span style="left:847.7px;width:43.5px">17.00</span><span style="left:1108.9px;width:47.6px">18.80</span><span style="left:1156.5px;width:47.6px">17.37</span><span style="left:1204.0px;width:47.2px">1.30</span><span style="left:1251.2px;width:47.6px">1.80</span><span style="left:1298.8px;width:38.7px">11.97</span><span style="left:1337.4px;width:38.5px">22.77</span><span style="left:1376.0px;width:38.7px">0.64</span><span style="left:1414.6px;width:38.7px">0.52</span></div>
<div class="r" style="top:503.28px"><span style="left:82.9px;text-align:left;letter-spacing:-0.6px">8/5/2019</span><span style="left:137.4px;width:56.8px">3</span><span style="left:194.3px;width:82.9px">ADD</span><span style="left:277.2px;width:59.4px">541</span><span style="left:336.6px;width:59.8px">29</span><span style="left:396.3px;width:38.7px">0.054</span><span style="left:435.0px;width:38.5px">0.013</span><span style="left:473.5px;width:39.6px;text-align:right">13,401</span><span style="left:517.4px;width:39.5px">99%</span><span style="left:557.0px;width:38.5px">3.71</span><span style="left:595.5px;width:38.7px">10.00</span><span style="left:634.1px;width:39.4px">5.00</span><span style="left:673.5px;width:43.5px">9.00</span><span style="left:717.1px;width:43.5px">10.00</span><span style="left:760.6px;width:43.5px">5.00</span><span style="left:804.1px;width:43.5px">9.00</span><span style="left:847.7px;width:43.5px">10.00</span><span style="left:1108.9px;width:47.6px">8.60</span><span style="left:1156.5px;width:47.6px">7.89</span><span style="left:1204.0px;width:47.2px">2.07</span><span style="left:1251.2px;width:47.6px">1.60</span><span style="left:1298.8px;width:38.7px">3.09</span><span style="left:1337.4px;width:38.5px">12.69</span><span style="left:1376.0px;width:38.7px">0.40</span><span style="left:1414.6px;width:38.7px">0.97</span></div>
<div class="r" style="top:512.05px"><span style="left:82.9px;text-align:left;letter-spacing:-0.6px">5/21/2018</span><span style="left:137.4px;width:56.8px">2</span><span style="left:194.3px;width:82.9px">ADD</span><span style="left:277.2px;width:59.4px">395</span><span style="left:336.6px;width:59.8px">36</span><span style="left:396.3px;width:38.7px">0.091</span><span style="left:435.0px;width:38.5px">0.023</span><span style="left:473.5px;width:39.6px;text-align:right">22,785</span><span style="left:517.4px;width:39.5px">98%</span><span style="left:557.0px;width:38.5px">3.50</span><span style="left:595.5px;width:38.7px">10.00</span><span style="left:634.1px;width:39.4px">5.00</span><span style="left:673.5px;width:43.5px">10.00</span><span style="left:717.1px;width:43.5px">8.00</span><span style="left:760.6px;width:43.5px">7.00</span><span style="left:804.1px;width:43.5px">9.00</span><span style="left:847.7px;width:43.5px">7.00</span><span style="left:1108.9px;width:47.6px">8.20</span><span style="left:1156.5px;width:47.6px">7.89</span><span style="left:1204.0px;width:47.2px">1.30</span><span style="left:1251.2px;width:47.6px">1.60</span><span style="left:1298.8px;width:38.7px">3.09</span><span style="left:1337.4px;width:38.5px">12.69</span><span style="left:1376.0px;width:38.7px">0.64</span><span style="left:1414.6px;width:38.7px">0.78</span></div>
<div class="r" style="top:520.81px"><span style="left:82.9px;text-align:left;letter-spacing:-0.6px">10/16/2018</span><span style="left:137.4px;width:56.8px">2</span><span style="left:194.3px;width:82.9px">XDC</span><span style="left:277.2px;width:59.4px">437</span><span style="left:336.6px;width:59.8px">35</span><span style="left:396.3px;width:38.7px">0.080</span><span style="left:435.0px;width:38.5px">0.027</span><span style="left:473.5px;width:39.6px;text-align:right">26,697</span><span style="left:517.4px;width:39.5px">97%</span><span style="left:557.0px;width:38.5px">3.43</span><span style="left:595.5px;width:38.7px">33.00</span><span style="left:634.1px;width:39.4px">22.00</span><span style="left:673.5px;width:43.5px">22.00</span><span style="left:717.1px;width:43.5px">23.00</span><span style="left:760.6px;width:43.5px">23.00</span><span style="left:804.1px;width:43.5px">33.00</span><span style="left:847.7px;width:43.5px">29.00</span><span style="left:1108.9px;width:47.6px">26.00</span><span style="left:1156.5px;width:47.6px">28.35</span><span style="left:1204.0px;width:47.2px">4.80</span><span style="left:1251.2px;width:47.6px">3.61</span><span style="left:1298.8px;width:38.7px">17.52</span><span style="left:1337.4px;width:38.5px">39.18</span><span style="left:1376.0px;width:38.7px">0.38</span><span style="left:1414.6px;width:38.7px">6.39</span></div>
<div class="r" style="top:529.58px"><span style="left:82.9px;text-align:left;letter-spacing:-0.6px">1/11/2019</span><span style="left:137.4px;width:56.8px">2</span><span style="left:194.3px;width:82.9px">ABC</span><span style="left:277.2px;width:59.4px">588</span><span style="left:336.6px;width:59.8px">23</span><span style="left:396.3px;width:38.7px">0.039</span><span style="left:435.0px;width:38.5px">0.020</span><span style="left:473.5px;width:39.6px;text-align:right">19,558</span><span style="left:517.4px;width:39.5px">98%</span><span style="left:557.0px;width:38.5px">3.56</span><span style="left:595.5px;width:38.7px">20.00</span><span style="left:634.1px;width:39.4px">15.00</span><span style="left:673.5px;width:43.5px">18.00</span><span style="left:717.1px;width:43.5px">20.00</span><span style="left:760.6px;width:43.5px">18.00</span><span style="left:804.1px;width:43.5px">17.00</span><span style="left:847.7px;width:43.5px">15.00</span><span style="left:1108.9px;width:47.6px">17.60</span><span style="left:1156.5px;width:47.6px">17.37</span><span style="left:1204.0px;width:47.2px">1.82</span><span style="left:1251.2px;width:47.6px">1.80</span><span style="left:1298.8px;width:38.7px">11.97</span><span style="left:1337.4px;width:38.5px">22.77</span><span style="left:1376.0px;width:38.7px">0.46</span><span style="left:1414.6px;width:38.7px">1.45</span></div>
<div class="r" style="top:538.34px"><span style="left:82.9px;text-align:left;letter-spacing:-0.6px">12/12/2019</span><span style="left:137.4px;width:56.8px">3</span><span style="left:194.3px;width:82.9px">ABC</span><span style="left:277.2px;width:59.4px">600</span><span style="left:336.6px;width:59.8px">47</span><span style="left:396.3px;width:38.7px">0.078</span><span style="left:435.0px;width:38.5px">0.039</span><span style="left:473.5px;width:39.6px;text-align:right">39,167</span><span style="left:517.4px;width:39.5px">96%</span><span style="left:557.0px;width:38.5px">3.26</span><span style="left:595.5px;width:38.7px">20.00</span><span style="left:634.1px;width:39.4px">15.00</span><span style="left:673.5px;width:43.5px">15.00</span><span style="left:717.1px;width:43.5px">16.00</span><span style="left:760.6px;width:43.5px">20.00</span><span style="left:804.1px;width:43.5px">15.00</span><span style="left:847.7px;width:43.5px">19.00</span><span style="left:1108.9px;width:47.6px">17.00</span><span style="left:1156.5px;width:47.6px">17.37</span><span style="left:1204.0px;width:47.2px">2.35</span><span style="left:1251.2px;width:47.6px">1.80</span><span style="left:1298.8px;width:38.7px">11.97</span><span style="left:1337.4px;width:38.5px">22.77</span><span style="left:1376.0px;width:38.7px">0.36</span><span style="left:1414.6px;width:38.7px">1.56</span></div>
<div class="r" style="top:547.11px"><span style="left:82.9px;text-align:left;letter-spacing:-0.6px">12/31/2019</span><span style="left:137.4px;width:56.8px">1</span><span style="left:194.3px;width:82.9px">ACC</span><span style="left:277.2px;width:59.4px">510</span><span style="left:336.6px;width:59.8px">50</span><span style="left:396.3px;width:38.7px">0.098</span><span style="left:435.0px;width:38.5px">0.049</span><span style="left:473.5px;width:39.6px;text-align:right">49,020</span><span style="left:517.4px;width:39.5px">95%</span><span style="left:557.0px;width:38.5px">3.15</span><span style="left:595.5px;width:38.7px">35.00</span><span style="left:634.1px;width:39.4px">25.00</span><span style="left:673.5px;width:43.5px">31.00</span><span style="left:717.1px;width:43.5px">29.00</span><span style="left:760.6px;width:43.5px">34.00</span><span style="left:804.1px;width:43.5px">30.00</span><span style="left:847.7px;width:43.5px">25.00</span><span style="left:1108.9px;width:47.6px">29.80</span><span style="left:1156.5px;width:47.6px">30.19</span><span style="left:1204.0px;width:47.2px">3.27</span><span style="left:1251.2px;width:47.6px">2.89</span><span style="left:1298.8px;width:38.7px">21.53</span><span style="left:1337.4px;width:38.5px">38.86</span><span style="left:1376.0px;width:38.7px">0.51</span><span style="left:1414.6px;width:38.7px">5.23</span></div>
<div class="r" style="top:555.87px"><span style="left:82.9px;text-align:left;letter-spacing:-0.6px">2/25/2019</span><span style="left:137.4px;width:56.8px">2</span><span style="left:194.3px;width:82.9px">ABC</span><span style="left:277.2px;width:59.4px">421</span><span style="left:336.6px;width:59.8px">40</span><span style="left:396.3px;width:38.7px">0.095</span><span style="left:435.0px;width:38.5px">0.048</span><span style="left:473.5px;width:39.6px;text-align:right">47,506</span><span style="left:517.4px;width:39.5px">95%</span><span style="left:557.0px;width:38.5px">3.17</span><span style="left:595.5px;width:38.7px">20.00</span><span style="left:634.1px;width:39.4px">15.00</span><span style="left:673.5px;width:43.5px">17.00</span><span style="left:717.1px;width:43.5px">16.00</span><span style="left:760.6px;width:43.5px">19.00</span><span style="left:804.1px;width:43.5px">20.00</span><span style="left:847.7px;width:43.5px">15.00</span><span style="left:1108.9px;width:47.6px">17.40</span><span style="left:1156.5px;width:47.6px">17.37</span><span style="left:1204.0px;width:47.2px">2.07</span><span style="left:1251.2px;width:47.6px">1.80</span><span style="left:1298.8px;width:38.7px">11.97</span><span style="left:1337.4px;width:38.5px">22.77</span><span style="left:1376.0px;width:38.7px">0.40</span><span style="left:1414.6px;width:38.7px">1.66</span></div>
<div class="r" style="top:564.63px"><span style="left:82.9px;text-align:left;letter-spacing:-0.6px">7/5/2019</span><span style="left:137.4px;width:56.8px">2</span><span style="left:194.3px;width:82.9px">XDC</span><span style="left:277.2px;width:59.4px">432</span><span style="left:336.6px;width:59.8px">22</span><span style="left:396.3px;width:38.7px">0.051</span><span style="left:435.0px;width:38.5px">0.017</span><span style="left:473.5px;width:39.6px;text-align:right">16,975</span><span style="left:517.4px;width:39.5px">98%</span><span style="left:557.0px;width:38.5px">3.62</span><span style="left:595.5px;width:38.7px">33.00</span><span style="left:634.1px;width:39.4px">22.00</span><span style="left:673.5px;width:43.5px">32.00</span><span style="left:717.1px;width:43.5px">33.00</span><span style="left:760.6px;width:43.5px">24.00</span><span style="left:804.1px;width:43.5px">24.00</span><span style="left:847.7px;width:43.5px">23.00</span><span style="left:1108.9px;width:47.6px">27.20</span><span style="left:1156.5px;width:47.6px">28.35</span><span style="left:1204.0px;width:47.2px">4.87</span><span style="left:1251.2px;width:47.6px">3.61</span><span style="left:1298.8px;width:38.7px">17.52</span><span style="left:1337.4px;width:38.5px">39.18</span><span style="left:1376.0px;width:38.7px">0.38</span><span style="left:1414.6px;width:38.7px">8.44</span></div>
<div class="r" style="top:573.40px"><span style="left:82.9px;text-align:left;letter-spacing:-0.6px">12/6/2019</span><span style="left:137.4px;width:56.8px">3</span><span style="left:194.3px;width:82.9px">ADD</span><span style="left:277.2px;width:59.4px">569</span><span style="left:336.6px;width:59.8px">24</span><span style="left:396.3px;width:38.7px">0.042</span><span style="left:435.0px;width:38.5px">0.011</span><span style="left:473.5px;width:39.6px;text-align:right">10,545</span><span style="left:517.4px;width:39.5px">99%</span><span style="left:557.0px;width:38.5px">3.81</span><span style="left:595.5px;width:38.7px">10.00</span><span style="left:634.1px;width:39.4px">5.00</span><span style="left:673.5px;width:43.5px">9.00</span><span style="left:717.1px;width:43.5px">8.00</span><span style="left:760.6px;width:43.5px">7.00</span><span style="left:804.1px;width:43.5px">10.00</span><span style="left:847.7px;width:43.5px">10.00</span><span style="left:1108.9px;width:47.6px">8.80</span><span style="left:1156.5px;width:47.6px">7.89</span><span style="left:1204.0px;width:47.2px">1.30</span><span style="left:1251.2px;width:47.6px">1.60</span><span style="left:1298.8px;width:38.7px">3.09</span><span style="left:1337.4px;width:38.5px">12.69</span><span style="left:1376.0px;width:38.7px">0.64</span><span style="left:1414.6px;width:38.7px">0.52</span></div>
<div class="r" style="top:582.16px"><span style="left:82.9px;text-align:left;letter-spacing:-0.6px">7/17/2019</span><span style="left:137.4px;width:56.8px">1</span><span style="left:194.3px;width:82.9px">ADD</span><span style="left:277.2px;width:59.4px">590</span><span style="left:336.6px;width:59.8px">48</span><span style="left:396.3px;width:38.7px">0.081</span><span style="left:435.0px;width:38.5px">0.020</span><span style="left:473.5px;width:39.6px;text-align:right">20,339</span><span style="left:517.4px;width:39.5px">98%</span><span style="left:557.0px;width:38.5px">3.55</span><span style="left:595.5px;width:38.7px">10.00</span><span style="left:634.1px;width:39.4px">5.00</span><span style="left:673.5px;width:43.5px">7.00</span><span style="left:717.1px;width:43.5px">8.00</span><span style="left:760.6px;width:43.5px">10.00</span><span style="left:804.1px;width:43.5px">9.00</span><span style="left:847.7px;width:43.5px">9.00</span><span style="left:1108.9px;width:47.6px">8.60</span><span style="left:1156.5px;width:47.6px">7.89</span><span style="left:1204.0px;width:47.2px">1.14</span><span style="left:1251.2px;width:47.6px">1.60</span><span style="left:1298.8px;width:38.7px">3.09</span><span style="left:1337.4px;width:38.5px">12.69</span><span style="left:1376.0px;width:38.7px">0.73</span><span style="left:1414.6px;width:38.7px">0.53</span></div>
<div class="r" style="top:590.93px"><span style="left:82.9px;text-align:left;letter-spacing:-0.6px">5/18/2019</span><span style="left:137.4px;width:56.8px">1</span><span style="left:194.3px;width:82.9px">ACC</span><span style="left:277.2px;width:59.4px">451</span><span style="left:336.6px;width:59.8px">32</span><span style="left:396.3px;width:38.7px">0.071</span><span style="left:435.0px;width:38.5px">0.035</span><span style="left:473.5px;width:39.6px;text-align:right">35,477</span><span style="left:517.4px;width:39.5px">96%</span><span style="left:557.0px;width:38.5px">3.31</span><span style="left:595.5px;width:38.7px">35.00</span><span style="left:634.1px;width:39.4px">25.00</span><span style="left:673.5px;width:43.5px">33.00</span><span style="left:717.1px;width:43.5px">32.00</span><span style="left:760.6px;width:43.5px">25.00</span><span style="left:804.1px;width:43.5px">30.00</span><span style="left:847.7px;width:43.5px">27.00</span><span style="left:1108.9px;width:47.6px">29.40</span><span style="left:1156.5px;width:47.6px">30.19</span><span style="left:1204.0px;width:47.2px">3.36</span><span style="left:1251.2px;width:47.6px">2.89</span><span style="left:1298.8px;width:38.7px">21.53</span><span style="left:1337.4px;width:38.5px">38.86</span><span style="left:1376.0px;width:38.7px">0.50</span><span style="left:1414.6px;width:38.7px">4.93</span></div>
<div class="r" style="top:599.70px"><span style="left:82.9px;text-align:left;letter-spacing:-0.6px">12/20/2019</span><span style="left:137.4px;width:56.8px">1</span><span style="left:194.3px;width:82.9px">ABC</span><span style="left:277.2px;width:59.4px">542</span><span style="left:336.6px;width:59.8px">45</span><span style="left:396.3px;width:38.7px">0.083</span><span style="left:435.0px;width:38.5px">0.042</span><span style="left:473.5px;width:39.6px;text-align:right">41,513</span><span style="left:517.4px;width:39.5px">96%</span><span style="left:557.0px;width:38.5px">3.23</span><span style="left:595.5px;width:38.7px">20.00</span><span style="left:634.1px;width:39.4px">15.00</span><span style="left:673.5px;width:43.5px">19.00</span><span style="left:717.1px;width:43.5px">18.00</span><span style="left:760.6px;width:43.5px">16.00</span><span style="left:804.1px;width:43.5px">20.00</span><span style="left:847.7px;width:43.5px">17.00</span><span style="left:1108.9px;width:47.6px">18.00</span><span style="left:1156.5px;width:47.6px">17.37</span><span style="left:1204.0px;width:47.2px">1.58</span><span style="left:1251.2px;width:47.6px">1.80</span><span style="left:1298.8px;width:38.7px">11.97</span><span style="left:1337.4px;width:38.5px">22.77</span><span style="left:1376.0px;width:38.7px">0.53</span><span style="left:1414.6px;width:38.7px">1.05</span></div>
</div></div>
<div class="abs" style="left:1185.5px;top:14.3px;width:14.5px;height:594.4px;background:#f1f1f1"></div>
<svg class="abs" style="left:1185.5px;top:14.3px" width="14.5" height="594" viewBox="0 0 14.5 594"><path d="M5.2 8 H12 L8.6 3.8 Z" fill="#6b6b6b"/><rect x="5.7" y="12.8" width="5.9" height="12.5" rx="2.9" fill="#6e6e6e"/><path d="M5.2 586.4 H12 L8.6 590.8 Z" fill="#6b6b6b"/></svg>
<div class="abs" style="left:0;top:608.6px;width:1200px;height:21.4px;background:#f1f1f1"></div>
<svg class="abs" style="left:0;top:608.4px" width="1200" height="21.6" viewBox="0 0 1200 21.6"><g stroke="#9a9a9a" stroke-width="0.9" fill="none"><path d="M24.4 9.2 L21.4 12.6 L24.4 16"/><path d="M46 9.2 L49 12.6 L46 16"/><path d="M272 12.8 H280.4 M276.2 8.6 V17"/></g><line x1="238.2" x2="238.2" y1="1" y2="21.6" stroke="#d6d6d6" stroke-width="0.8"/><g fill="#555"><circle cx="723.4" cy="9.9" r="0.75"/><circle cx="723.4" cy="12.7" r="0.75"/><circle cx="723.4" cy="15.5" r="0.75"/></g><path d="M745.4 9.6 V16 L740.8 12.8 Z" fill="#6b6b6b"/><path d="M1176.2 9.6 V16 L1180.8 12.8 Z" fill="#6b6b6b"/><rect x="749.3" y="9.4" width="407.4" height="6.9" rx="3.4" fill="#6b6b6b"/></svg>
<div class="abs" style="left:88.6px;top:612.6px;width:70.6px;height:18px;background:#13506c;border-radius:3px 3px 0 0;color:#fff;font-size:10.6px;line-height:19.4px;text-align:center;white-space:nowrap">Instructions</div>
<div class="abs" style="left:166.4px;top:608.4px;width:68.6px;height:21.6px;background:linear-gradient(#ffffff 30%,#c0e9d4);border-radius:0 0 2px 2px;color:#222;font-size:10.1px;font-weight:bold;line-height:25.4px;text-align:center;white-space:nowrap">Product QC</div>
<div class="abs" style="left:172px;top:627.6px;width:57px;height:1.2px;background:#1f8a5b"></div>
</div></body></html>
